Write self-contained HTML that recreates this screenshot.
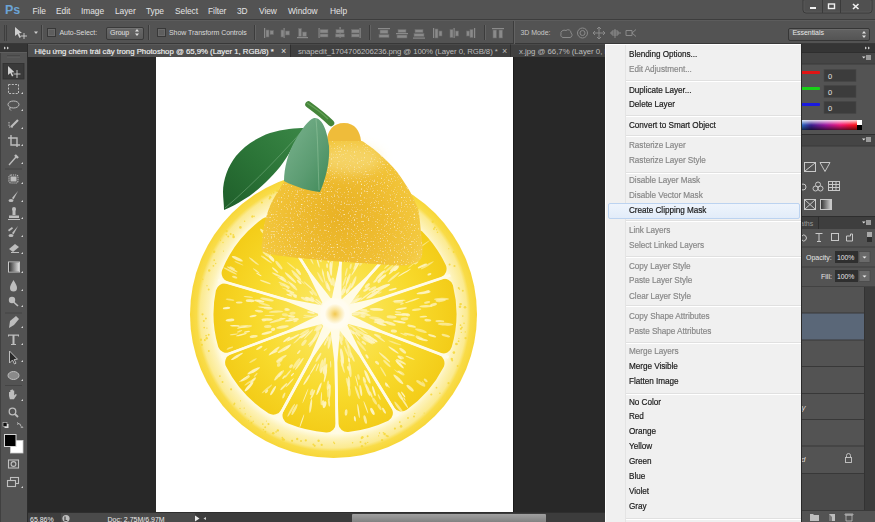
<!DOCTYPE html>
<html><head><meta charset="utf-8">
<style>
*{margin:0;padding:0;box-sizing:border-box}
html,body{width:875px;height:522px;overflow:hidden;background:#282828;font-family:"Liberation Sans",sans-serif}
.a{position:absolute}
.t{position:absolute;white-space:nowrap;line-height:1}
#menubar{left:0;top:0;width:875px;height:20px;background:#535353;border-bottom:1px solid #3d3d3d}
#menubar .t{top:6.5px;font-size:8.4px;color:#e4e4e4;letter-spacing:-0.05px}
#optbar{left:0;top:20px;width:875px;height:24px;background:#535353;border-top:1px solid #5c5c5c;border-bottom:1px solid #383838}
#optbar .t{font-size:7px;color:#dadada;letter-spacing:-0.05px}
.sep{position:absolute;top:4px;width:2px;height:15px;border-left:1px solid #3c3c3c;border-right:1px solid #636363}
.cb{position:absolute;width:9px;height:9px;background:#5e5e5e;border:1px solid #383838;box-shadow:inset 0 0 0 1px #6a6a6a}
#tabbar{left:28px;top:44px;width:847px;height:13px;background:#3b3b3b}
.tab{position:absolute;top:0;height:13px;background:#404040;border-right:1px solid #2f2f2f;border-top:1px solid #4a4a4a}
.tab .t{top:3px;font-size:7.8px;color:#bdbdbd;letter-spacing:-0.02px}
#toolbar{left:0;top:44px;width:28px;height:478px;background:#535353;border-left:1px solid #404040;border-right:1px solid #2c2c2c}
#doc{left:28px;top:57px;width:780px;height:455px;background:#282828}
#canvas{left:156px;top:57px;width:358px;height:455px;background:#fff;overflow:hidden;border-right:1px solid #1a1a1a}
#status{left:28px;top:512px;width:580px;height:10px;background:#3c3c3c;border-top:1px solid #2e2e2e}
#status .t{top:2.5px;font-size:7px;color:#ececec}
#ctx{left:605px;top:44px;width:196px;height:478px;background:#f0f0f0;border-left:1px solid #fff;border-top:1px solid #fff;box-shadow:1px 0 0 #2a2a2a}
#ctx .t{left:23px;font-size:9.2px;color:#1a1a1a;letter-spacing:-0.05px;-webkit-text-stroke:0.2px currentColor;transform:scaleX(0.89);transform-origin:0 0}
#ctx .d{color:#888}
#ctx .s{position:absolute;left:20px;width:175px;height:2px;border-top:1px solid #e0e0e0;border-bottom:1px solid #fff}
#panels{left:801px;top:44px;width:74px;height:478px;background:#535353}
#panels .t{font-size:7px;color:#dedede}
</style></head><body>
<div class="a" id="doc"></div>
<div class="a" id="canvas">
<svg width="358" height="455" viewBox="156 57 358 455">
<defs>
  <radialGradient id="rind" cx="333.5" cy="314.5" r="143.5" gradientUnits="userSpaceOnUse">
    <stop offset="0" stop-color="#fffbe4"/>
    <stop offset="0.83" stop-color="#fffbe2"/>
    <stop offset="0.87" stop-color="#fdf2b8"/>
    <stop offset="0.93" stop-color="#fbea90"/>
    <stop offset="0.955" stop-color="#f9dc48"/>
    <stop offset="1" stop-color="#f7d638"/>
  </radialGradient>
  <radialGradient id="seg" cx="335" cy="314" r="121" gradientUnits="userSpaceOnUse">
    <stop offset="0" stop-color="#fdf2a8"/>
    <stop offset="0.22" stop-color="#fae55a"/>
    <stop offset="0.65" stop-color="#f8da2c"/>
    <stop offset="1" stop-color="#f3cc18"/>
  </radialGradient>
  <radialGradient id="dome" cx="340" cy="215" r="95" gradientUnits="userSpaceOnUse">
    <stop offset="0" stop-color="#e9b226"/>
    <stop offset="0.5" stop-color="#efbd30"/>
    <stop offset="0.85" stop-color="#f3c83e"/>
    <stop offset="1" stop-color="#f5d052"/>
  </radialGradient>
  <linearGradient id="leaf1" x1="1" y1="0" x2="0" y2="1">
    <stop offset="0" stop-color="#3a8646"/>
    <stop offset="0.5" stop-color="#2b7437"/>
    <stop offset="1" stop-color="#1f5e2a"/>
  </linearGradient>
  <linearGradient id="leaf2" x1="0" y1="0" x2="1" y2="1">
    <stop offset="0" stop-color="#7cb490"/>
    <stop offset="0.6" stop-color="#5c9c72"/>
    <stop offset="1" stop-color="#3f8a58"/>
  </linearGradient>
  <radialGradient id="star" cx="335" cy="314" r="17" gradientUnits="userSpaceOnUse">
    <stop offset="0" stop-color="#f2c850"/>
    <stop offset="0.28" stop-color="#fae4a0"/>
    <stop offset="0.6" stop-color="#fffcf0"/>
    <stop offset="0.82" stop-color="#fffcf0"/>
    <stop offset="1" stop-color="#fffcf0" stop-opacity="0"/>
  </radialGradient>
  <filter id="blur3" x="-50%" y="-50%" width="200%" height="200%"><feGaussianBlur stdDeviation="6"/></filter>
  <filter id="pores" x="0" y="0" width="1" height="1">
    <feTurbulence type="fractalNoise" baseFrequency="0.7" numOctaves="1" seed="3" result="n"/>
    <feColorMatrix in="n" type="matrix" values="0 0 0 0 0.97  0 0 0 0 0.85  0 0 0 0 0.45  0 0 0 -5 1.9" result="c"/>
    <feComposite in="c" in2="SourceGraphic" operator="in" result="m"/>
    <feMerge><feMergeNode in="SourceGraphic"/><feMergeNode in="m"/></feMerge>
  </filter>
</defs>
<circle cx="333.5" cy="314.5" r="143.5" fill="url(#rind)"/>
<path fill="url(#seg)" stroke="url(#seg)" stroke-width="18" stroke-linejoin="round" d="M353.5,331.8L435.5,363.2A112.5,109.7 0 0 1 401.5,402.5L356.1,328.8ZM338.5,339.1L383.9,412.8A112.5,109.7 0 0 1 347.3,423.0L345.7,337.1ZM325.1,337.4L326.7,423.4A112.5,109.7 0 0 1 291.5,415.2L332.9,339.3ZM314.7,329.8L273.3,405.7A112.5,109.7 0 0 1 234.1,362.5L316.4,331.7ZM309.0,313.0L226.7,343.8A112.5,109.7 0 0 1 224.7,292.4L309.2,317.0ZM315.1,297.7L230.6,273.2A112.5,109.7 0 0 1 267.7,226.1L313.7,299.4ZM331.3,288.9L285.2,215.6A112.5,109.7 0 0 1 336.5,204.3L327.3,289.8ZM347.7,291.9L357.0,206.4A112.5,109.7 0 0 1 400.7,225.0L342.9,289.8ZM358.4,303.0L416.3,238.2A112.5,109.7 0 0 1 437.6,268.9L354.2,296.9ZM360.9,315.9L444.3,287.9A112.5,109.7 0 0 1 443.1,344.5L361.0,313.1Z"/>
<g fill="#fef4c0"><ellipse cx="384.5" cy="357.3" rx="7.5" ry="1.0" transform="rotate(42 384.5 357.3)" opacity="0.81"/><ellipse cx="366.0" cy="339.8" rx="5.8" ry="1.4" transform="rotate(32 366.0 339.8)" opacity="0.69"/><ellipse cx="356.5" cy="335.7" rx="6.2" ry="0.5" transform="rotate(56 356.5 335.7)" opacity="0.98"/><ellipse cx="396.3" cy="371.2" rx="2.9" ry="0.5" transform="rotate(44 396.3 371.2)" opacity="0.58"/><ellipse cx="369.2" cy="336.6" rx="2.2" ry="1.0" transform="rotate(33 369.2 336.6)" opacity="0.93"/><ellipse cx="386.9" cy="363.5" rx="5.0" ry="1.2" transform="rotate(44 386.9 363.5)" opacity="0.68"/><ellipse cx="398.6" cy="407.2" rx="7.0" ry="1.3" transform="rotate(53 398.6 407.2)" opacity="0.65"/><ellipse cx="379.7" cy="338.0" rx="6.6" ry="0.9" transform="rotate(36 379.7 338.0)" opacity="0.72"/><ellipse cx="404.4" cy="399.0" rx="2.0" ry="0.7" transform="rotate(60 404.4 399.0)" opacity="0.76"/><ellipse cx="425.7" cy="380.3" rx="2.4" ry="1.2" transform="rotate(42 425.7 380.3)" opacity="0.67"/><ellipse cx="359.4" cy="332.0" rx="7.8" ry="1.3" transform="rotate(29 359.4 332.0)" opacity="0.66"/><ellipse cx="362.3" cy="330.3" rx="6.8" ry="0.7" transform="rotate(33 362.3 330.3)" opacity="0.75"/><ellipse cx="363.9" cy="342.9" rx="2.8" ry="1.2" transform="rotate(38 363.9 342.9)" opacity="0.74"/><ellipse cx="370.9" cy="338.1" rx="7.8" ry="1.4" transform="rotate(31 370.9 338.1)" opacity="0.95"/><ellipse cx="369.4" cy="339.8" rx="7.1" ry="1.2" transform="rotate(30 369.4 339.8)" opacity="1.00"/><ellipse cx="371.1" cy="338.0" rx="6.6" ry="0.9" transform="rotate(30 371.1 338.0)" opacity="0.58"/><ellipse cx="358.0" cy="334.1" rx="3.5" ry="1.2" transform="rotate(39 358.0 334.1)" opacity="0.75"/><ellipse cx="420.8" cy="383.4" rx="5.4" ry="1.5" transform="rotate(33 420.8 383.4)" opacity="0.62"/><ellipse cx="403.2" cy="394.5" rx="3.5" ry="0.7" transform="rotate(55 403.2 394.5)" opacity="0.97"/><ellipse cx="361.4" cy="345.8" rx="7.3" ry="1.2" transform="rotate(49 361.4 345.8)" opacity="0.60"/><ellipse cx="352.1" cy="331.9" rx="3.4" ry="1.3" transform="rotate(42 352.1 331.9)" opacity="0.92"/><ellipse cx="401.1" cy="357.3" rx="3.1" ry="1.3" transform="rotate(25 401.1 357.3)" opacity="0.65"/><ellipse cx="383.2" cy="371.7" rx="5.7" ry="0.8" transform="rotate(59 383.2 371.7)" opacity="0.64"/><ellipse cx="352.8" cy="327.3" rx="4.7" ry="0.6" transform="rotate(31 352.8 327.3)" opacity="0.72"/><ellipse cx="402.7" cy="350.7" rx="4.2" ry="1.5" transform="rotate(39 402.7 350.7)" opacity="0.85"/><ellipse cx="399.6" cy="372.4" rx="2.8" ry="0.5" transform="rotate(33 399.6 372.4)" opacity="0.96"/><ellipse cx="386.5" cy="384.8" rx="2.1" ry="1.2" transform="rotate(54 386.5 384.8)" opacity="0.88"/><ellipse cx="367.0" cy="356.4" rx="2.5" ry="1.1" transform="rotate(58 367.0 356.4)" opacity="0.96"/><ellipse cx="398.4" cy="379.3" rx="6.8" ry="1.5" transform="rotate(44 398.4 379.3)" opacity="0.86"/><ellipse cx="400.3" cy="396.0" rx="4.5" ry="1.4" transform="rotate(59 400.3 396.0)" opacity="0.81"/><ellipse cx="401.0" cy="361.8" rx="5.5" ry="1.2" transform="rotate(28 401.0 361.8)" opacity="0.84"/><ellipse cx="404.5" cy="402.6" rx="6.4" ry="0.9" transform="rotate(57 404.5 402.6)" opacity="0.81"/><ellipse cx="377.1" cy="362.8" rx="2.5" ry="1.3" transform="rotate(41 377.1 362.8)" opacity="0.82"/><ellipse cx="393.5" cy="350.0" rx="6.2" ry="1.0" transform="rotate(35 393.5 350.0)" opacity="0.96"/><ellipse cx="377.4" cy="335.7" rx="3.8" ry="1.2" transform="rotate(22 377.4 335.7)" opacity="0.63"/><ellipse cx="410.1" cy="388.2" rx="4.7" ry="1.5" transform="rotate(42 410.1 388.2)" opacity="0.85"/><ellipse cx="368.0" cy="339.6" rx="6.8" ry="1.5" transform="rotate(46 368.0 339.6)" opacity="0.72"/><ellipse cx="399.6" cy="357.5" rx="2.8" ry="1.0" transform="rotate(41 399.6 357.5)" opacity="0.93"/><ellipse cx="387.5" cy="385.1" rx="3.7" ry="0.7" transform="rotate(53 387.5 385.1)" opacity="0.67"/><ellipse cx="369.4" cy="340.3" rx="5.8" ry="1.0" transform="rotate(34 369.4 340.3)" opacity="0.93"/><ellipse cx="423.6" cy="383.1" rx="2.4" ry="0.5" transform="rotate(46 423.6 383.1)" opacity="0.57"/><ellipse cx="401.2" cy="373.0" rx="3.9" ry="1.4" transform="rotate(33 401.2 373.0)" opacity="0.61"/><ellipse cx="394.8" cy="342.9" rx="7.0" ry="0.8" transform="rotate(19 394.8 342.9)" opacity="0.57"/><ellipse cx="399.6" cy="364.2" rx="5.8" ry="1.2" transform="rotate(45 399.6 364.2)" opacity="0.98"/><ellipse cx="410.1" cy="357.8" rx="4.9" ry="0.7" transform="rotate(21 410.1 357.8)" opacity="0.76"/><ellipse cx="371.1" cy="394.6" rx="3.6" ry="0.9" transform="rotate(70 371.1 394.6)" opacity="0.78"/><ellipse cx="349.3" cy="392.0" rx="4.4" ry="1.4" transform="rotate(88 349.3 392.0)" opacity="0.59"/><ellipse cx="354.9" cy="418.7" rx="2.8" ry="1.0" transform="rotate(82 354.9 418.7)" opacity="0.96"/><ellipse cx="350.0" cy="370.1" rx="7.3" ry="1.4" transform="rotate(84 350.0 370.1)" opacity="0.76"/><ellipse cx="367.9" cy="390.0" rx="6.3" ry="1.4" transform="rotate(70 367.9 390.0)" opacity="0.87"/><ellipse cx="342.0" cy="356.0" rx="7.9" ry="1.6" transform="rotate(81 342.0 356.0)" opacity="0.91"/><ellipse cx="342.6" cy="366.2" rx="7.1" ry="0.9" transform="rotate(74 342.6 366.2)" opacity="0.75"/><ellipse cx="348.1" cy="386.5" rx="4.9" ry="0.5" transform="rotate(86 348.1 386.5)" opacity="0.58"/><ellipse cx="374.6" cy="401.1" rx="4.0" ry="1.4" transform="rotate(59 374.6 401.1)" opacity="0.62"/><ellipse cx="348.9" cy="383.3" rx="7.0" ry="1.3" transform="rotate(88 348.9 383.3)" opacity="0.77"/><ellipse cx="384.0" cy="410.7" rx="3.3" ry="1.1" transform="rotate(60 384.0 410.7)" opacity="0.88"/><ellipse cx="357.3" cy="392.4" rx="7.1" ry="1.1" transform="rotate(71 357.3 392.4)" opacity="0.72"/><ellipse cx="346.1" cy="412.5" rx="3.2" ry="1.4" transform="rotate(93 346.1 412.5)" opacity="0.79"/><ellipse cx="365.0" cy="383.7" rx="5.2" ry="1.1" transform="rotate(69 365.0 383.7)" opacity="0.56"/><ellipse cx="365.2" cy="419.5" rx="4.4" ry="1.4" transform="rotate(76 365.2 419.5)" opacity="0.77"/><ellipse cx="373.9" cy="391.1" rx="5.2" ry="1.0" transform="rotate(73 373.9 391.1)" opacity="0.97"/><ellipse cx="349.0" cy="360.0" rx="2.8" ry="1.0" transform="rotate(80 349.0 360.0)" opacity="0.96"/><ellipse cx="358.5" cy="377.0" rx="3.1" ry="1.2" transform="rotate(79 358.5 377.0)" opacity="0.61"/><ellipse cx="379.2" cy="397.0" rx="3.2" ry="0.7" transform="rotate(66 379.2 397.0)" opacity="0.69"/><ellipse cx="348.5" cy="368.4" rx="2.6" ry="1.3" transform="rotate(69 348.5 368.4)" opacity="0.78"/><ellipse cx="352.3" cy="357.0" rx="5.2" ry="1.0" transform="rotate(66 352.3 357.0)" opacity="0.74"/><ellipse cx="364.4" cy="379.8" rx="3.2" ry="1.2" transform="rotate(69 364.4 379.8)" opacity="0.79"/><ellipse cx="358.5" cy="411.0" rx="7.1" ry="0.8" transform="rotate(82 358.5 411.0)" opacity="0.91"/><ellipse cx="372.4" cy="411.4" rx="3.9" ry="1.5" transform="rotate(64 372.4 411.4)" opacity="1.00"/><ellipse cx="379.5" cy="407.1" rx="3.4" ry="1.3" transform="rotate(60 379.5 407.1)" opacity="0.59"/><ellipse cx="365.9" cy="407.3" rx="6.7" ry="0.6" transform="rotate(70 365.9 407.3)" opacity="0.86"/><ellipse cx="341.7" cy="335.0" rx="6.1" ry="1.5" transform="rotate(82 341.7 335.0)" opacity="0.60"/><ellipse cx="347.8" cy="382.5" rx="5.0" ry="1.3" transform="rotate(73 347.8 382.5)" opacity="0.58"/><ellipse cx="347.1" cy="343.5" rx="5.3" ry="1.1" transform="rotate(70 347.1 343.5)" opacity="0.62"/><ellipse cx="349.4" cy="351.2" rx="7.0" ry="1.6" transform="rotate(78 349.4 351.2)" opacity="0.59"/><ellipse cx="340.7" cy="340.5" rx="4.8" ry="1.3" transform="rotate(75 340.7 340.5)" opacity="0.76"/><ellipse cx="356.8" cy="381.2" rx="5.6" ry="0.5" transform="rotate(76 356.8 381.2)" opacity="0.93"/><ellipse cx="346.6" cy="351.7" rx="6.4" ry="0.9" transform="rotate(67 346.6 351.7)" opacity="0.62"/><ellipse cx="367.4" cy="376.8" rx="7.4" ry="1.4" transform="rotate(67 367.4 376.8)" opacity="0.94"/><ellipse cx="360.8" cy="390.5" rx="5.6" ry="1.1" transform="rotate(81 360.8 390.5)" opacity="0.91"/><ellipse cx="342.2" cy="360.4" rx="6.5" ry="1.4" transform="rotate(88 342.2 360.4)" opacity="0.73"/><ellipse cx="294.5" cy="409.6" rx="6.2" ry="1.3" transform="rotate(118 294.5 409.6)" opacity="0.73"/><ellipse cx="329.0" cy="402.5" rx="4.1" ry="1.0" transform="rotate(84 329.0 402.5)" opacity="0.71"/><ellipse cx="311.7" cy="392.1" rx="3.4" ry="1.5" transform="rotate(110 311.7 392.1)" opacity="0.70"/><ellipse cx="312.8" cy="394.4" rx="5.2" ry="0.9" transform="rotate(115 312.8 394.4)" opacity="0.84"/><ellipse cx="305.4" cy="395.9" rx="7.9" ry="0.5" transform="rotate(112 305.4 395.9)" opacity="0.88"/><ellipse cx="325.2" cy="359.7" rx="2.3" ry="0.7" transform="rotate(99 325.2 359.7)" opacity="0.59"/><ellipse cx="318.5" cy="357.3" rx="5.3" ry="1.1" transform="rotate(120 318.5 357.3)" opacity="0.81"/><ellipse cx="301.9" cy="420.9" rx="6.9" ry="0.6" transform="rotate(109 301.9 420.9)" opacity="0.89"/><ellipse cx="327.7" cy="338.2" rx="3.0" ry="1.0" transform="rotate(100 327.7 338.2)" opacity="0.77"/><ellipse cx="329.6" cy="392.8" rx="7.7" ry="1.0" transform="rotate(94 329.6 392.8)" opacity="0.82"/><ellipse cx="325.5" cy="370.2" rx="5.9" ry="1.1" transform="rotate(95 325.5 370.2)" opacity="0.87"/><ellipse cx="330.7" cy="364.3" rx="3.5" ry="0.5" transform="rotate(88 330.7 364.3)" opacity="0.89"/><ellipse cx="313.0" cy="369.2" rx="6.5" ry="0.6" transform="rotate(121 313.0 369.2)" opacity="0.98"/><ellipse cx="326.4" cy="341.1" rx="4.6" ry="1.0" transform="rotate(117 326.4 341.1)" opacity="0.66"/><ellipse cx="306.8" cy="379.7" rx="6.3" ry="1.0" transform="rotate(122 306.8 379.7)" opacity="0.92"/><ellipse cx="327.9" cy="392.0" rx="5.7" ry="1.0" transform="rotate(89 327.9 392.0)" opacity="0.57"/><ellipse cx="327.9" cy="385.3" rx="4.7" ry="1.2" transform="rotate(95 327.9 385.3)" opacity="0.67"/><ellipse cx="319.0" cy="388.8" rx="6.7" ry="1.1" transform="rotate(112 319.0 388.8)" opacity="0.98"/><ellipse cx="322.9" cy="402.9" rx="2.7" ry="1.5" transform="rotate(103 322.9 402.9)" opacity="0.83"/><ellipse cx="325.8" cy="369.6" rx="6.1" ry="1.1" transform="rotate(101 325.8 369.6)" opacity="0.83"/><ellipse cx="324.6" cy="404.7" rx="3.5" ry="1.6" transform="rotate(105 324.6 404.7)" opacity="0.95"/><ellipse cx="330.3" cy="338.1" rx="3.6" ry="1.0" transform="rotate(103 330.3 338.1)" opacity="0.60"/><ellipse cx="329.3" cy="386.6" rx="2.5" ry="1.2" transform="rotate(95 329.3 386.6)" opacity="0.83"/><ellipse cx="321.6" cy="370.1" rx="3.3" ry="0.9" transform="rotate(108 321.6 370.1)" opacity="0.93"/><ellipse cx="330.0" cy="342.0" rx="6.9" ry="1.2" transform="rotate(105 330.0 342.0)" opacity="0.65"/><ellipse cx="325.4" cy="375.6" rx="6.9" ry="0.9" transform="rotate(102 325.4 375.6)" opacity="1.00"/><ellipse cx="321.4" cy="365.5" rx="6.5" ry="1.5" transform="rotate(103 321.4 365.5)" opacity="0.72"/><ellipse cx="325.4" cy="343.4" rx="2.5" ry="0.6" transform="rotate(109 325.4 343.4)" opacity="0.77"/><ellipse cx="321.3" cy="398.4" rx="6.7" ry="0.6" transform="rotate(93 321.3 398.4)" opacity="0.85"/><ellipse cx="329.0" cy="342.6" rx="6.3" ry="1.3" transform="rotate(97 329.0 342.6)" opacity="0.61"/><ellipse cx="317.4" cy="367.5" rx="4.2" ry="0.6" transform="rotate(112 317.4 367.5)" opacity="0.81"/><ellipse cx="291.2" cy="410.3" rx="7.5" ry="1.0" transform="rotate(120 291.2 410.3)" opacity="0.69"/><ellipse cx="324.1" cy="365.4" rx="7.6" ry="1.5" transform="rotate(97 324.1 365.4)" opacity="0.71"/><ellipse cx="324.0" cy="369.9" rx="4.4" ry="0.9" transform="rotate(95 324.0 369.9)" opacity="0.80"/><ellipse cx="310.7" cy="406.0" rx="7.0" ry="1.1" transform="rotate(98 310.7 406.0)" opacity="0.89"/><ellipse cx="266.6" cy="391.4" rx="2.1" ry="1.1" transform="rotate(132 266.6 391.4)" opacity="0.81"/><ellipse cx="244.4" cy="378.4" rx="6.8" ry="0.6" transform="rotate(145 244.4 378.4)" opacity="0.90"/><ellipse cx="315.9" cy="336.8" rx="6.4" ry="1.5" transform="rotate(121 315.9 336.8)" opacity="0.84"/><ellipse cx="305.1" cy="334.6" rx="5.9" ry="0.8" transform="rotate(139 305.1 334.6)" opacity="0.89"/><ellipse cx="273.7" cy="352.4" rx="4.4" ry="0.9" transform="rotate(157 273.7 352.4)" opacity="0.85"/><ellipse cx="281.3" cy="358.3" rx="6.3" ry="1.3" transform="rotate(148 281.3 358.3)" opacity="0.73"/><ellipse cx="253.7" cy="370.8" rx="7.1" ry="1.4" transform="rotate(151 253.7 370.8)" opacity="0.95"/><ellipse cx="245.4" cy="378.6" rx="5.1" ry="1.3" transform="rotate(150 245.4 378.6)" opacity="0.74"/><ellipse cx="296.6" cy="363.4" rx="6.4" ry="1.6" transform="rotate(125 296.6 363.4)" opacity="0.63"/><ellipse cx="304.0" cy="342.7" rx="3.8" ry="1.6" transform="rotate(128 304.0 342.7)" opacity="0.69"/><ellipse cx="308.6" cy="334.1" rx="6.7" ry="0.7" transform="rotate(133 308.6 334.1)" opacity="0.76"/><ellipse cx="265.5" cy="349.6" rx="2.2" ry="0.6" transform="rotate(146 265.5 349.6)" opacity="0.65"/><ellipse cx="297.6" cy="339.8" rx="5.6" ry="0.7" transform="rotate(138 297.6 339.8)" opacity="0.68"/><ellipse cx="302.5" cy="335.9" rx="3.9" ry="1.1" transform="rotate(152 302.5 335.9)" opacity="0.77"/><ellipse cx="293.3" cy="337.7" rx="7.5" ry="0.9" transform="rotate(151 293.3 337.7)" opacity="0.98"/><ellipse cx="291.0" cy="366.2" rx="2.3" ry="1.5" transform="rotate(135 291.0 366.2)" opacity="0.72"/><ellipse cx="279.6" cy="360.9" rx="3.6" ry="1.6" transform="rotate(142 279.6 360.9)" opacity="0.66"/><ellipse cx="318.9" cy="328.1" rx="4.2" ry="1.4" transform="rotate(142 318.9 328.1)" opacity="0.82"/><ellipse cx="310.8" cy="342.5" rx="3.9" ry="0.8" transform="rotate(137 310.8 342.5)" opacity="0.78"/><ellipse cx="259.3" cy="347.9" rx="3.6" ry="1.1" transform="rotate(148 259.3 347.9)" opacity="0.90"/><ellipse cx="318.9" cy="326.0" rx="7.1" ry="1.4" transform="rotate(134 318.9 326.0)" opacity="0.67"/><ellipse cx="283.8" cy="386.6" rx="4.9" ry="1.0" transform="rotate(134 283.8 386.6)" opacity="0.81"/><ellipse cx="266.9" cy="389.0" rx="6.7" ry="1.0" transform="rotate(140 266.9 389.0)" opacity="0.59"/><ellipse cx="273.1" cy="390.6" rx="5.3" ry="1.1" transform="rotate(121 273.1 390.6)" opacity="0.92"/><ellipse cx="298.8" cy="352.1" rx="2.5" ry="0.8" transform="rotate(132 298.8 352.1)" opacity="0.87"/><ellipse cx="288.0" cy="346.9" rx="2.6" ry="0.9" transform="rotate(144 288.0 346.9)" opacity="0.99"/><ellipse cx="253.9" cy="371.6" rx="2.1" ry="0.9" transform="rotate(148 253.9 371.6)" opacity="0.66"/><ellipse cx="278.8" cy="364.9" rx="2.1" ry="1.6" transform="rotate(143 278.8 364.9)" opacity="0.64"/><ellipse cx="281.2" cy="373.6" rx="4.3" ry="1.1" transform="rotate(127 281.2 373.6)" opacity="0.70"/><ellipse cx="285.9" cy="349.1" rx="3.5" ry="0.7" transform="rotate(148 285.9 349.1)" opacity="0.70"/><ellipse cx="249.6" cy="382.0" rx="6.3" ry="0.9" transform="rotate(147 249.6 382.0)" opacity="0.59"/><ellipse cx="312.5" cy="341.8" rx="6.1" ry="1.3" transform="rotate(122 312.5 341.8)" opacity="0.73"/><ellipse cx="255.7" cy="374.9" rx="2.5" ry="0.7" transform="rotate(135 255.7 374.9)" opacity="0.61"/><ellipse cx="299.4" cy="363.8" rx="7.5" ry="1.0" transform="rotate(125 299.4 363.8)" opacity="0.84"/><ellipse cx="253.1" cy="360.6" rx="4.3" ry="0.9" transform="rotate(148 253.1 360.6)" opacity="0.56"/><ellipse cx="284.5" cy="348.7" rx="7.9" ry="1.4" transform="rotate(148 284.5 348.7)" opacity="0.82"/><ellipse cx="318.8" cy="329.4" rx="4.1" ry="1.2" transform="rotate(128 318.8 329.4)" opacity="0.72"/><ellipse cx="274.1" cy="351.1" rx="7.0" ry="1.2" transform="rotate(141 274.1 351.1)" opacity="0.89"/><ellipse cx="253.0" cy="380.5" rx="4.1" ry="1.1" transform="rotate(133 253.0 380.5)" opacity="0.87"/><ellipse cx="249.0" cy="386.7" rx="6.3" ry="1.4" transform="rotate(133 249.0 386.7)" opacity="0.98"/><ellipse cx="284.0" cy="377.1" rx="2.5" ry="0.8" transform="rotate(130 284.0 377.1)" opacity="0.86"/><ellipse cx="286.7" cy="339.5" rx="4.2" ry="1.0" transform="rotate(144 286.7 339.5)" opacity="0.99"/><ellipse cx="304.5" cy="332.2" rx="5.3" ry="1.1" transform="rotate(150 304.5 332.2)" opacity="0.67"/><ellipse cx="237.0" cy="356.4" rx="6.9" ry="1.2" transform="rotate(149 237.0 356.4)" opacity="0.92"/><ellipse cx="290.7" cy="338.6" rx="3.4" ry="1.1" transform="rotate(157 290.7 338.6)" opacity="0.63"/><ellipse cx="292.5" cy="374.6" rx="2.2" ry="0.7" transform="rotate(134 292.5 374.6)" opacity="0.97"/><ellipse cx="278.1" cy="375.8" rx="6.0" ry="1.3" transform="rotate(130 278.1 375.8)" opacity="0.82"/><ellipse cx="283.8" cy="395.5" rx="3.2" ry="1.0" transform="rotate(114 283.8 395.5)" opacity="0.72"/><ellipse cx="287.9" cy="373.7" rx="5.1" ry="0.8" transform="rotate(129 287.9 373.7)" opacity="0.70"/><ellipse cx="289.7" cy="382.7" rx="6.0" ry="0.7" transform="rotate(132 289.7 382.7)" opacity="0.82"/><ellipse cx="267.1" cy="319.5" rx="5.7" ry="1.3" transform="rotate(180 267.1 319.5)" opacity="0.89"/><ellipse cx="267.0" cy="299.5" rx="7.0" ry="1.4" transform="rotate(191 267.0 299.5)" opacity="0.75"/><ellipse cx="259.3" cy="301.0" rx="5.2" ry="1.1" transform="rotate(189 259.3 301.0)" opacity="0.96"/><ellipse cx="282.5" cy="327.0" rx="6.4" ry="1.5" transform="rotate(170 282.5 327.0)" opacity="0.82"/><ellipse cx="242.5" cy="327.2" rx="5.6" ry="0.6" transform="rotate(164 242.5 327.2)" opacity="0.75"/><ellipse cx="264.1" cy="320.3" rx="2.3" ry="1.3" transform="rotate(175 264.1 320.3)" opacity="0.66"/><ellipse cx="282.4" cy="318.5" rx="3.4" ry="0.6" transform="rotate(183 282.4 318.5)" opacity="0.98"/><ellipse cx="250.2" cy="300.7" rx="4.5" ry="1.4" transform="rotate(184 250.2 300.7)" opacity="0.89"/><ellipse cx="259.2" cy="301.0" rx="2.6" ry="1.4" transform="rotate(182 259.2 301.0)" opacity="0.79"/><ellipse cx="229.9" cy="348.1" rx="3.5" ry="0.8" transform="rotate(158 229.9 348.1)" opacity="0.58"/><ellipse cx="230.0" cy="299.7" rx="4.4" ry="0.9" transform="rotate(190 230.0 299.7)" opacity="0.57"/><ellipse cx="310.9" cy="312.6" rx="3.8" ry="1.0" transform="rotate(192 310.9 312.6)" opacity="0.99"/><ellipse cx="267.8" cy="326.5" rx="3.8" ry="1.5" transform="rotate(177 267.8 326.5)" opacity="0.64"/><ellipse cx="234.7" cy="325.8" rx="4.8" ry="0.7" transform="rotate(181 234.7 325.8)" opacity="1.00"/><ellipse cx="292.5" cy="313.3" rx="3.1" ry="1.5" transform="rotate(172 292.5 313.3)" opacity="0.60"/><ellipse cx="244.7" cy="326.5" rx="7.4" ry="1.5" transform="rotate(176 244.7 326.5)" opacity="0.61"/><ellipse cx="248.2" cy="296.9" rx="4.7" ry="0.6" transform="rotate(186 248.2 296.9)" opacity="0.69"/><ellipse cx="247.0" cy="331.7" rx="3.1" ry="0.8" transform="rotate(172 247.0 331.7)" opacity="0.91"/><ellipse cx="276.0" cy="311.7" rx="7.3" ry="1.1" transform="rotate(177 276.0 311.7)" opacity="0.69"/><ellipse cx="226.5" cy="308.1" rx="3.7" ry="1.2" transform="rotate(175 226.5 308.1)" opacity="0.99"/><ellipse cx="269.6" cy="315.5" rx="5.2" ry="0.5" transform="rotate(181 269.6 315.5)" opacity="0.68"/><ellipse cx="287.9" cy="309.5" rx="2.5" ry="0.8" transform="rotate(191 287.9 309.5)" opacity="0.66"/><ellipse cx="284.9" cy="314.8" rx="3.1" ry="1.5" transform="rotate(189 284.9 314.8)" opacity="0.57"/><ellipse cx="267.9" cy="308.2" rx="4.3" ry="1.5" transform="rotate(185 267.9 308.2)" opacity="0.63"/><ellipse cx="259.0" cy="311.2" rx="4.2" ry="1.2" transform="rotate(188 259.0 311.2)" opacity="0.78"/><ellipse cx="264.3" cy="304.3" rx="6.1" ry="1.1" transform="rotate(197 264.3 304.3)" opacity="0.63"/><ellipse cx="241.4" cy="334.7" rx="5.6" ry="0.8" transform="rotate(166 241.4 334.7)" opacity="0.90"/><ellipse cx="239.2" cy="302.5" rx="3.4" ry="1.0" transform="rotate(181 239.2 302.5)" opacity="0.81"/><ellipse cx="266.9" cy="332.9" rx="5.6" ry="1.3" transform="rotate(166 266.9 332.9)" opacity="0.94"/><ellipse cx="295.4" cy="321.1" rx="2.1" ry="1.0" transform="rotate(168 295.4 321.1)" opacity="0.75"/><ellipse cx="286.7" cy="309.5" rx="2.4" ry="1.5" transform="rotate(187 286.7 309.5)" opacity="0.79"/><ellipse cx="239.6" cy="331.2" rx="2.9" ry="0.8" transform="rotate(160 239.6 331.2)" opacity="0.69"/><ellipse cx="253.1" cy="316.0" rx="3.6" ry="1.1" transform="rotate(170 253.1 316.0)" opacity="0.92"/><ellipse cx="295.9" cy="319.3" rx="3.0" ry="1.3" transform="rotate(179 295.9 319.3)" opacity="0.90"/><ellipse cx="307.4" cy="315.7" rx="4.2" ry="0.7" transform="rotate(186 307.4 315.7)" opacity="0.57"/><ellipse cx="265.4" cy="307.5" rx="7.9" ry="0.7" transform="rotate(185 265.4 307.5)" opacity="0.89"/><ellipse cx="310.0" cy="316.6" rx="7.3" ry="0.7" transform="rotate(172 310.0 316.6)" opacity="0.68"/><ellipse cx="273.1" cy="329.4" rx="2.2" ry="1.6" transform="rotate(171 273.1 329.4)" opacity="0.88"/><ellipse cx="290.2" cy="320.4" rx="5.3" ry="0.8" transform="rotate(171 290.2 320.4)" opacity="0.97"/><ellipse cx="277.1" cy="320.7" rx="7.9" ry="1.2" transform="rotate(164 277.1 320.7)" opacity="0.73"/><ellipse cx="253.7" cy="336.4" rx="4.1" ry="1.3" transform="rotate(171 253.7 336.4)" opacity="0.82"/><ellipse cx="230.0" cy="320.1" rx="4.4" ry="1.4" transform="rotate(174 230.0 320.1)" opacity="0.90"/><ellipse cx="291.4" cy="318.4" rx="3.1" ry="1.1" transform="rotate(167 291.4 318.4)" opacity="0.64"/><ellipse cx="291.3" cy="316.2" rx="3.9" ry="1.0" transform="rotate(187 291.3 316.2)" opacity="0.86"/><ellipse cx="234.0" cy="334.3" rx="4.3" ry="0.6" transform="rotate(172 234.0 334.3)" opacity="0.71"/><ellipse cx="289.2" cy="295.1" rx="3.1" ry="0.8" transform="rotate(201 289.2 295.1)" opacity="0.97"/><ellipse cx="256.3" cy="270.9" rx="4.2" ry="0.7" transform="rotate(218 256.3 270.9)" opacity="0.71"/><ellipse cx="268.7" cy="248.1" rx="7.4" ry="0.5" transform="rotate(222 268.7 248.1)" opacity="0.72"/><ellipse cx="314.2" cy="292.8" rx="4.0" ry="1.3" transform="rotate(227 314.2 292.8)" opacity="0.57"/><ellipse cx="281.6" cy="285.1" rx="2.2" ry="0.7" transform="rotate(211 281.6 285.1)" opacity="0.56"/><ellipse cx="291.4" cy="284.0" rx="5.3" ry="0.6" transform="rotate(219 291.4 284.0)" opacity="0.67"/><ellipse cx="268.8" cy="252.8" rx="2.9" ry="0.7" transform="rotate(219 268.8 252.8)" opacity="0.87"/><ellipse cx="283.4" cy="280.3" rx="7.2" ry="0.7" transform="rotate(210 283.4 280.3)" opacity="0.71"/><ellipse cx="295.0" cy="296.4" rx="2.1" ry="1.2" transform="rotate(206 295.0 296.4)" opacity="0.91"/><ellipse cx="237.3" cy="258.8" rx="6.0" ry="1.5" transform="rotate(204 237.3 258.8)" opacity="0.86"/><ellipse cx="284.0" cy="246.6" rx="7.2" ry="0.8" transform="rotate(236 284.0 246.6)" opacity="0.59"/><ellipse cx="281.7" cy="279.0" rx="2.4" ry="0.9" transform="rotate(211 281.7 279.0)" opacity="0.77"/><ellipse cx="290.3" cy="291.7" rx="4.4" ry="1.0" transform="rotate(200 290.3 291.7)" opacity="0.85"/><ellipse cx="293.2" cy="294.5" rx="4.1" ry="1.0" transform="rotate(199 293.2 294.5)" opacity="0.81"/><ellipse cx="266.2" cy="258.9" rx="6.2" ry="0.5" transform="rotate(217 266.2 258.9)" opacity="0.71"/><ellipse cx="312.3" cy="298.2" rx="2.3" ry="1.0" transform="rotate(217 312.3 298.2)" opacity="0.76"/><ellipse cx="287.6" cy="287.5" rx="2.1" ry="0.9" transform="rotate(218 287.6 287.5)" opacity="0.80"/><ellipse cx="299.3" cy="282.0" rx="3.1" ry="1.0" transform="rotate(225 299.3 282.0)" opacity="0.98"/><ellipse cx="290.5" cy="277.6" rx="7.7" ry="1.3" transform="rotate(223 290.5 277.6)" opacity="0.83"/><ellipse cx="283.5" cy="279.1" rx="3.7" ry="1.4" transform="rotate(222 283.5 279.1)" opacity="0.72"/><ellipse cx="234.7" cy="277.1" rx="2.8" ry="1.1" transform="rotate(197 234.7 277.1)" opacity="0.71"/><ellipse cx="232.3" cy="268.0" rx="3.2" ry="0.8" transform="rotate(208 232.3 268.0)" opacity="0.66"/><ellipse cx="319.1" cy="301.8" rx="4.4" ry="0.8" transform="rotate(218 319.1 301.8)" opacity="0.84"/><ellipse cx="278.9" cy="265.1" rx="5.4" ry="1.4" transform="rotate(231 278.9 265.1)" opacity="0.70"/><ellipse cx="298.5" cy="271.8" rx="3.9" ry="1.3" transform="rotate(234 298.5 271.8)" opacity="0.86"/><ellipse cx="262.3" cy="231.1" rx="3.0" ry="1.2" transform="rotate(229 262.3 231.1)" opacity="0.80"/><ellipse cx="284.4" cy="284.8" rx="6.5" ry="1.1" transform="rotate(205 284.4 284.8)" opacity="0.66"/><ellipse cx="286.6" cy="289.5" rx="5.1" ry="0.6" transform="rotate(199 286.6 289.5)" opacity="0.58"/><ellipse cx="311.3" cy="292.8" rx="2.7" ry="1.0" transform="rotate(228 311.3 292.8)" opacity="0.77"/><ellipse cx="309.0" cy="286.3" rx="7.2" ry="0.6" transform="rotate(223 309.0 286.3)" opacity="0.78"/><ellipse cx="253.9" cy="261.3" rx="6.3" ry="0.8" transform="rotate(218 253.9 261.3)" opacity="0.70"/><ellipse cx="296.3" cy="275.3" rx="7.1" ry="1.4" transform="rotate(227 296.3 275.3)" opacity="0.74"/><ellipse cx="268.4" cy="255.7" rx="7.0" ry="1.4" transform="rotate(214 268.4 255.7)" opacity="0.72"/><ellipse cx="258.9" cy="274.5" rx="3.1" ry="0.5" transform="rotate(210 258.9 274.5)" opacity="0.97"/><ellipse cx="232.3" cy="269.3" rx="6.1" ry="1.0" transform="rotate(207 232.3 269.3)" opacity="0.73"/><ellipse cx="273.1" cy="226.2" rx="2.3" ry="1.3" transform="rotate(228 273.1 226.2)" opacity="0.57"/><ellipse cx="298.9" cy="279.2" rx="8.0" ry="0.6" transform="rotate(221 298.9 279.2)" opacity="0.56"/><ellipse cx="275.2" cy="270.1" rx="4.2" ry="0.8" transform="rotate(223 275.2 270.1)" opacity="0.93"/><ellipse cx="293.2" cy="286.3" rx="5.7" ry="1.3" transform="rotate(224 293.2 286.3)" opacity="0.73"/><ellipse cx="266.5" cy="259.6" rx="6.8" ry="0.7" transform="rotate(213 266.5 259.6)" opacity="0.60"/><ellipse cx="238.9" cy="263.3" rx="4.9" ry="0.6" transform="rotate(205 238.9 263.3)" opacity="0.56"/><ellipse cx="265.4" cy="282.0" rx="5.8" ry="0.8" transform="rotate(200 265.4 282.0)" opacity="0.77"/><ellipse cx="284.3" cy="285.7" rx="2.3" ry="0.6" transform="rotate(218 284.3 285.7)" opacity="0.69"/><ellipse cx="309.5" cy="299.4" rx="4.9" ry="1.6" transform="rotate(204 309.5 299.4)" opacity="0.94"/><ellipse cx="277.9" cy="275.5" rx="6.8" ry="0.9" transform="rotate(206 277.9 275.5)" opacity="0.80"/><ellipse cx="271.6" cy="258.6" rx="3.7" ry="1.5" transform="rotate(229 271.6 258.6)" opacity="1.00"/><ellipse cx="291.6" cy="266.0" rx="6.3" ry="0.7" transform="rotate(219 291.6 266.0)" opacity="0.63"/><ellipse cx="304.7" cy="299.0" rx="4.2" ry="1.3" transform="rotate(203 304.7 299.0)" opacity="0.78"/><ellipse cx="316.9" cy="302.5" rx="7.8" ry="0.5" transform="rotate(214 316.9 302.5)" opacity="0.91"/><ellipse cx="267.6" cy="245.9" rx="4.4" ry="1.4" transform="rotate(233 267.6 245.9)" opacity="0.90"/><ellipse cx="230.1" cy="270.9" rx="7.7" ry="0.9" transform="rotate(207 230.1 270.9)" opacity="0.66"/><ellipse cx="284.5" cy="221.7" rx="5.5" ry="0.7" transform="rotate(240 284.5 221.7)" opacity="0.72"/><ellipse cx="330.3" cy="231.2" rx="4.2" ry="1.2" transform="rotate(264 330.3 231.2)" opacity="0.68"/><ellipse cx="301.1" cy="215.2" rx="2.6" ry="0.9" transform="rotate(256 301.1 215.2)" opacity="0.65"/><ellipse cx="316.8" cy="225.3" rx="6.1" ry="0.7" transform="rotate(251 316.8 225.3)" opacity="0.61"/><ellipse cx="320.6" cy="260.3" rx="2.1" ry="1.1" transform="rotate(253 320.6 260.3)" opacity="0.69"/><ellipse cx="335.9" cy="241.6" rx="3.2" ry="1.5" transform="rotate(267 335.9 241.6)" opacity="0.89"/><ellipse cx="333.3" cy="282.0" rx="4.6" ry="1.6" transform="rotate(261 333.3 282.0)" opacity="0.73"/><ellipse cx="300.4" cy="233.6" rx="3.6" ry="1.2" transform="rotate(256 300.4 233.6)" opacity="0.70"/><ellipse cx="323.7" cy="275.9" rx="7.9" ry="0.7" transform="rotate(257 323.7 275.9)" opacity="0.72"/><ellipse cx="304.1" cy="237.9" rx="5.7" ry="1.5" transform="rotate(256 304.1 237.9)" opacity="0.83"/><ellipse cx="321.7" cy="245.7" rx="2.7" ry="1.4" transform="rotate(263 321.7 245.7)" opacity="0.75"/><ellipse cx="312.4" cy="233.2" rx="4.3" ry="0.8" transform="rotate(257 312.4 233.2)" opacity="0.81"/><ellipse cx="302.6" cy="251.0" rx="5.8" ry="1.0" transform="rotate(245 302.6 251.0)" opacity="0.82"/><ellipse cx="290.7" cy="216.8" rx="4.8" ry="1.6" transform="rotate(251 290.7 216.8)" opacity="0.69"/><ellipse cx="339.1" cy="224.2" rx="4.4" ry="1.5" transform="rotate(265 339.1 224.2)" opacity="1.00"/><ellipse cx="310.4" cy="250.0" rx="7.0" ry="1.2" transform="rotate(258 310.4 250.0)" opacity="0.92"/><ellipse cx="314.1" cy="221.1" rx="8.0" ry="0.6" transform="rotate(265 314.1 221.1)" opacity="0.87"/><ellipse cx="330.9" cy="268.0" rx="4.7" ry="1.1" transform="rotate(272 330.9 268.0)" opacity="0.64"/><ellipse cx="327.1" cy="265.7" rx="2.4" ry="1.1" transform="rotate(267 327.1 265.7)" opacity="0.77"/><ellipse cx="330.8" cy="268.9" rx="7.1" ry="1.3" transform="rotate(266 330.8 268.9)" opacity="0.96"/><ellipse cx="295.7" cy="227.1" rx="4.2" ry="0.6" transform="rotate(237 295.7 227.1)" opacity="0.71"/><ellipse cx="331.2" cy="213.3" rx="2.7" ry="0.7" transform="rotate(266 331.2 213.3)" opacity="0.93"/><ellipse cx="334.3" cy="234.5" rx="2.4" ry="1.6" transform="rotate(264 334.3 234.5)" opacity="0.83"/><ellipse cx="325.1" cy="212.7" rx="3.2" ry="1.2" transform="rotate(263 325.1 212.7)" opacity="0.56"/><ellipse cx="317.9" cy="262.1" rx="5.8" ry="0.8" transform="rotate(254 317.9 262.1)" opacity="0.86"/><ellipse cx="320.3" cy="277.4" rx="6.2" ry="1.0" transform="rotate(241 320.3 277.4)" opacity="0.60"/><ellipse cx="317.4" cy="208.2" rx="4.1" ry="0.7" transform="rotate(271 317.4 208.2)" opacity="0.86"/><ellipse cx="307.9" cy="228.2" rx="3.9" ry="0.9" transform="rotate(246 307.9 228.2)" opacity="0.83"/><ellipse cx="331.0" cy="251.8" rx="4.5" ry="1.0" transform="rotate(267 331.0 251.8)" opacity="0.97"/><ellipse cx="327.9" cy="259.3" rx="3.4" ry="1.1" transform="rotate(259 327.9 259.3)" opacity="0.94"/><ellipse cx="331.9" cy="264.5" rx="6.1" ry="1.0" transform="rotate(275 331.9 264.5)" opacity="0.72"/><ellipse cx="319.6" cy="224.8" rx="4.7" ry="0.6" transform="rotate(259 319.6 224.8)" opacity="0.68"/><ellipse cx="335.4" cy="250.2" rx="3.8" ry="1.3" transform="rotate(274 335.4 250.2)" opacity="0.66"/><ellipse cx="310.3" cy="257.8" rx="7.4" ry="0.8" transform="rotate(245 310.3 257.8)" opacity="0.70"/><ellipse cx="332.2" cy="217.0" rx="5.5" ry="1.1" transform="rotate(260 332.2 217.0)" opacity="0.95"/><ellipse cx="326.9" cy="285.1" rx="4.2" ry="1.3" transform="rotate(258 326.9 285.1)" opacity="0.70"/><ellipse cx="338.1" cy="210.5" rx="2.1" ry="1.2" transform="rotate(271 338.1 210.5)" opacity="0.71"/><ellipse cx="314.0" cy="251.3" rx="6.0" ry="1.2" transform="rotate(261 314.0 251.3)" opacity="0.99"/><ellipse cx="303.2" cy="206.9" rx="7.0" ry="1.2" transform="rotate(258 303.2 206.9)" opacity="1.00"/><ellipse cx="328.4" cy="287.2" rx="4.4" ry="1.2" transform="rotate(251 328.4 287.2)" opacity="1.00"/><ellipse cx="323.1" cy="273.4" rx="2.9" ry="0.9" transform="rotate(259 323.1 273.4)" opacity="0.59"/><ellipse cx="328.7" cy="276.5" rx="5.7" ry="1.3" transform="rotate(256 328.7 276.5)" opacity="0.92"/><ellipse cx="328.4" cy="224.9" rx="2.7" ry="1.0" transform="rotate(256 328.4 224.9)" opacity="0.94"/><ellipse cx="335.1" cy="206.5" rx="2.1" ry="0.9" transform="rotate(271 335.1 206.5)" opacity="0.79"/><ellipse cx="331.0" cy="281.9" rx="3.8" ry="1.1" transform="rotate(256 331.0 281.9)" opacity="0.81"/><ellipse cx="344.6" cy="281.1" rx="5.1" ry="0.8" transform="rotate(291 344.6 281.1)" opacity="0.66"/><ellipse cx="348.0" cy="254.0" rx="3.3" ry="1.0" transform="rotate(283 348.0 254.0)" opacity="0.76"/><ellipse cx="356.0" cy="216.5" rx="7.1" ry="0.7" transform="rotate(291 356.0 216.5)" opacity="0.79"/><ellipse cx="362.7" cy="259.6" rx="7.2" ry="1.6" transform="rotate(295 362.7 259.6)" opacity="0.55"/><ellipse cx="353.7" cy="282.2" rx="6.4" ry="1.3" transform="rotate(293 353.7 282.2)" opacity="0.79"/><ellipse cx="342.9" cy="292.0" rx="3.8" ry="1.6" transform="rotate(292 342.9 292.0)" opacity="0.93"/><ellipse cx="344.9" cy="290.6" rx="2.5" ry="0.8" transform="rotate(285 344.9 290.6)" opacity="0.96"/><ellipse cx="356.7" cy="264.8" rx="5.9" ry="1.5" transform="rotate(302 356.7 264.8)" opacity="0.81"/><ellipse cx="375.1" cy="256.9" rx="4.4" ry="0.8" transform="rotate(309 375.1 256.9)" opacity="0.67"/><ellipse cx="356.7" cy="260.9" rx="4.9" ry="0.9" transform="rotate(290 356.7 260.9)" opacity="0.75"/><ellipse cx="347.4" cy="291.3" rx="2.4" ry="1.1" transform="rotate(299 347.4 291.3)" opacity="0.73"/><ellipse cx="346.3" cy="271.9" rx="4.2" ry="0.8" transform="rotate(284 346.3 271.9)" opacity="0.65"/><ellipse cx="371.7" cy="230.4" rx="2.1" ry="0.9" transform="rotate(302 371.7 230.4)" opacity="0.55"/><ellipse cx="382.0" cy="251.6" rx="4.2" ry="1.2" transform="rotate(304 382.0 251.6)" opacity="0.69"/><ellipse cx="370.4" cy="243.2" rx="3.9" ry="1.0" transform="rotate(296 370.4 243.2)" opacity="0.89"/><ellipse cx="343.3" cy="289.2" rx="3.5" ry="0.8" transform="rotate(294 343.3 289.2)" opacity="0.74"/><ellipse cx="371.3" cy="220.1" rx="3.7" ry="1.2" transform="rotate(282 371.3 220.1)" opacity="0.99"/><ellipse cx="366.8" cy="221.1" rx="3.9" ry="1.4" transform="rotate(294 366.8 221.1)" opacity="0.84"/><ellipse cx="347.4" cy="290.4" rx="2.3" ry="1.2" transform="rotate(298 347.4 290.4)" opacity="0.97"/><ellipse cx="349.6" cy="233.9" rx="7.6" ry="1.3" transform="rotate(282 349.6 233.9)" opacity="0.55"/><ellipse cx="368.3" cy="230.2" rx="6.1" ry="1.6" transform="rotate(299 368.3 230.2)" opacity="0.58"/><ellipse cx="370.6" cy="227.0" rx="6.5" ry="0.9" transform="rotate(291 370.6 227.0)" opacity="0.75"/><ellipse cx="346.7" cy="283.0" rx="6.4" ry="0.6" transform="rotate(283 346.7 283.0)" opacity="0.93"/><ellipse cx="371.1" cy="238.0" rx="2.7" ry="0.6" transform="rotate(291 371.1 238.0)" opacity="0.98"/><ellipse cx="378.9" cy="253.1" rx="3.3" ry="1.0" transform="rotate(306 378.9 253.1)" opacity="0.93"/><ellipse cx="352.4" cy="285.0" rx="4.8" ry="0.5" transform="rotate(299 352.4 285.0)" opacity="0.72"/><ellipse cx="385.5" cy="245.4" rx="5.0" ry="1.3" transform="rotate(303 385.5 245.4)" opacity="0.90"/><ellipse cx="350.1" cy="285.9" rx="3.0" ry="1.1" transform="rotate(292 350.1 285.9)" opacity="0.71"/><ellipse cx="348.5" cy="278.7" rx="5.5" ry="1.1" transform="rotate(288 348.5 278.7)" opacity="0.81"/><ellipse cx="368.6" cy="220.7" rx="5.5" ry="1.0" transform="rotate(299 368.6 220.7)" opacity="0.70"/><ellipse cx="359.3" cy="230.8" rx="3.6" ry="1.3" transform="rotate(287 359.3 230.8)" opacity="0.67"/><ellipse cx="348.3" cy="289.9" rx="4.3" ry="1.3" transform="rotate(297 348.3 289.9)" opacity="0.83"/><ellipse cx="380.5" cy="254.2" rx="7.5" ry="1.0" transform="rotate(306 380.5 254.2)" opacity="0.65"/><ellipse cx="354.5" cy="224.7" rx="3.8" ry="1.4" transform="rotate(273 354.5 224.7)" opacity="0.86"/><ellipse cx="367.5" cy="245.8" rx="4.0" ry="0.7" transform="rotate(304 367.5 245.8)" opacity="0.89"/><ellipse cx="355.0" cy="220.2" rx="6.7" ry="0.7" transform="rotate(276 355.0 220.2)" opacity="0.79"/><ellipse cx="353.1" cy="237.1" rx="6.6" ry="1.1" transform="rotate(291 353.1 237.1)" opacity="0.97"/><ellipse cx="364.5" cy="233.2" rx="7.7" ry="1.3" transform="rotate(285 364.5 233.2)" opacity="0.94"/><ellipse cx="361.3" cy="228.8" rx="3.5" ry="0.5" transform="rotate(287 361.3 228.8)" opacity="0.66"/><ellipse cx="350.6" cy="266.2" rx="2.8" ry="1.0" transform="rotate(283 350.6 266.2)" opacity="0.68"/><ellipse cx="355.1" cy="269.4" rx="7.2" ry="0.7" transform="rotate(301 355.1 269.4)" opacity="0.93"/><ellipse cx="368.8" cy="242.4" rx="6.4" ry="1.1" transform="rotate(298 368.8 242.4)" opacity="0.96"/><ellipse cx="408.4" cy="254.4" rx="2.3" ry="1.5" transform="rotate(317 408.4 254.4)" opacity="0.90"/><ellipse cx="372.5" cy="288.6" rx="4.2" ry="1.3" transform="rotate(334 372.5 288.6)" opacity="0.78"/><ellipse cx="396.1" cy="268.4" rx="3.4" ry="1.5" transform="rotate(315 396.1 268.4)" opacity="0.97"/><ellipse cx="396.3" cy="256.4" rx="7.4" ry="0.6" transform="rotate(317 396.3 256.4)" opacity="0.60"/><ellipse cx="423.9" cy="244.4" rx="7.2" ry="0.6" transform="rotate(325 423.9 244.4)" opacity="0.58"/><ellipse cx="355.0" cy="301.1" rx="7.9" ry="1.3" transform="rotate(334 355.0 301.1)" opacity="0.90"/><ellipse cx="388.0" cy="265.2" rx="5.2" ry="0.7" transform="rotate(317 388.0 265.2)" opacity="0.71"/><ellipse cx="388.7" cy="269.0" rx="6.2" ry="1.0" transform="rotate(319 388.7 269.0)" opacity="0.59"/><ellipse cx="393.6" cy="277.2" rx="7.8" ry="1.1" transform="rotate(320 393.6 277.2)" opacity="0.69"/><ellipse cx="383.1" cy="286.9" rx="7.6" ry="1.6" transform="rotate(339 383.1 286.9)" opacity="0.97"/><ellipse cx="429.4" cy="274.2" rx="2.1" ry="1.0" transform="rotate(338 429.4 274.2)" opacity="0.86"/><ellipse cx="404.2" cy="272.8" rx="7.6" ry="0.6" transform="rotate(329 404.2 272.8)" opacity="0.98"/><ellipse cx="354.5" cy="299.9" rx="7.2" ry="1.6" transform="rotate(314 354.5 299.9)" opacity="0.56"/><ellipse cx="422.4" cy="266.0" rx="5.1" ry="1.1" transform="rotate(336 422.4 266.0)" opacity="0.91"/><ellipse cx="351.6" cy="302.8" rx="6.8" ry="1.6" transform="rotate(332 351.6 302.8)" opacity="0.73"/><ellipse cx="379.4" cy="281.4" rx="2.1" ry="1.3" transform="rotate(318 379.4 281.4)" opacity="0.81"/><ellipse cx="393.0" cy="270.3" rx="6.0" ry="1.0" transform="rotate(317 393.0 270.3)" opacity="0.95"/><ellipse cx="365.8" cy="289.3" rx="3.5" ry="1.0" transform="rotate(326 365.8 289.3)" opacity="0.70"/><ellipse cx="374.4" cy="290.6" rx="3.6" ry="1.1" transform="rotate(324 374.4 290.6)" opacity="0.94"/><ellipse cx="367.0" cy="289.4" rx="3.8" ry="0.9" transform="rotate(326 367.0 289.4)" opacity="0.85"/><ellipse cx="416.2" cy="262.5" rx="2.5" ry="1.3" transform="rotate(322 416.2 262.5)" opacity="0.65"/><ellipse cx="392.7" cy="289.3" rx="4.2" ry="0.9" transform="rotate(344 392.7 289.3)" opacity="1.00"/><ellipse cx="380.3" cy="275.0" rx="6.7" ry="1.4" transform="rotate(315 380.3 275.0)" opacity="0.91"/><ellipse cx="381.8" cy="277.9" rx="5.6" ry="1.3" transform="rotate(321 381.8 277.9)" opacity="0.92"/><ellipse cx="353.3" cy="302.0" rx="4.3" ry="0.6" transform="rotate(334 353.3 302.0)" opacity="0.61"/><ellipse cx="373.0" cy="294.6" rx="7.8" ry="1.5" transform="rotate(329 373.0 294.6)" opacity="0.97"/><ellipse cx="366.2" cy="295.8" rx="7.7" ry="0.7" transform="rotate(322 366.2 295.8)" opacity="0.86"/><ellipse cx="427.2" cy="265.3" rx="7.7" ry="1.0" transform="rotate(329 427.2 265.3)" opacity="0.60"/><ellipse cx="379.6" cy="292.9" rx="2.4" ry="0.7" transform="rotate(331 379.6 292.9)" opacity="0.57"/><ellipse cx="375.4" cy="280.8" rx="2.7" ry="1.1" transform="rotate(321 375.4 280.8)" opacity="0.81"/><ellipse cx="413.9" cy="263.4" rx="7.7" ry="0.6" transform="rotate(321 413.9 263.4)" opacity="0.58"/><ellipse cx="381.4" cy="288.9" rx="7.5" ry="1.1" transform="rotate(324 381.4 288.9)" opacity="0.70"/><ellipse cx="395.3" cy="267.0" rx="6.8" ry="1.6" transform="rotate(321 395.3 267.0)" opacity="0.82"/><ellipse cx="418.5" cy="257.3" rx="3.1" ry="1.5" transform="rotate(335 418.5 257.3)" opacity="0.56"/><ellipse cx="411.0" cy="259.4" rx="2.3" ry="0.7" transform="rotate(317 411.0 259.4)" opacity="0.88"/><ellipse cx="367.3" cy="285.6" rx="3.3" ry="1.4" transform="rotate(318 367.3 285.6)" opacity="0.84"/><ellipse cx="401.9" cy="303.7" rx="2.1" ry="0.8" transform="rotate(342 401.9 303.7)" opacity="0.67"/><ellipse cx="416.5" cy="309.6" rx="4.8" ry="1.2" transform="rotate(353 416.5 309.6)" opacity="0.71"/><ellipse cx="439.8" cy="321.2" rx="4.5" ry="1.1" transform="rotate(363 439.8 321.2)" opacity="0.70"/><ellipse cx="441.5" cy="299.1" rx="7.6" ry="1.4" transform="rotate(359 441.5 299.1)" opacity="0.62"/><ellipse cx="403.6" cy="334.3" rx="3.7" ry="0.7" transform="rotate(381 403.6 334.3)" opacity="0.66"/><ellipse cx="412.3" cy="300.5" rx="7.7" ry="0.8" transform="rotate(342 412.3 300.5)" opacity="0.86"/><ellipse cx="391.6" cy="316.9" rx="5.0" ry="1.5" transform="rotate(363 391.6 316.9)" opacity="0.72"/><ellipse cx="355.3" cy="314.4" rx="3.6" ry="1.1" transform="rotate(364 355.3 314.4)" opacity="0.76"/><ellipse cx="365.9" cy="314.6" rx="4.9" ry="1.2" transform="rotate(371 365.9 314.6)" opacity="0.68"/><ellipse cx="399.2" cy="300.7" rx="6.8" ry="0.8" transform="rotate(355 399.2 300.7)" opacity="0.91"/><ellipse cx="381.6" cy="324.2" rx="5.0" ry="1.0" transform="rotate(374 381.6 324.2)" opacity="0.98"/><ellipse cx="405.0" cy="314.7" rx="3.7" ry="1.4" transform="rotate(361 405.0 314.7)" opacity="0.70"/><ellipse cx="376.7" cy="309.4" rx="7.0" ry="1.4" transform="rotate(363 376.7 309.4)" opacity="0.96"/><ellipse cx="420.9" cy="330.7" rx="6.3" ry="1.4" transform="rotate(377 420.9 330.7)" opacity="0.63"/><ellipse cx="433.5" cy="304.6" rx="3.5" ry="1.5" transform="rotate(345 433.5 304.6)" opacity="0.78"/><ellipse cx="390.4" cy="323.5" rx="5.7" ry="1.5" transform="rotate(379 390.4 323.5)" opacity="0.84"/><ellipse cx="363.0" cy="316.2" rx="2.7" ry="1.6" transform="rotate(372 363.0 316.2)" opacity="0.69"/><ellipse cx="375.6" cy="318.4" rx="6.5" ry="1.6" transform="rotate(369 375.6 318.4)" opacity="0.61"/><ellipse cx="423.6" cy="292.7" rx="7.2" ry="1.3" transform="rotate(352 423.6 292.7)" opacity="0.94"/><ellipse cx="409.3" cy="334.5" rx="5.8" ry="1.0" transform="rotate(374 409.3 334.5)" opacity="0.71"/><ellipse cx="358.1" cy="312.4" rx="6.8" ry="0.8" transform="rotate(359 358.1 312.4)" opacity="0.90"/><ellipse cx="423.4" cy="316.6" rx="3.9" ry="0.8" transform="rotate(355 423.4 316.6)" opacity="0.84"/><ellipse cx="419.2" cy="337.8" rx="4.0" ry="1.5" transform="rotate(384 419.2 337.8)" opacity="0.68"/><ellipse cx="445.4" cy="324.2" rx="7.8" ry="1.4" transform="rotate(362 445.4 324.2)" opacity="0.68"/><ellipse cx="408.0" cy="315.0" rx="2.2" ry="1.4" transform="rotate(362 408.0 315.0)" opacity="0.76"/><ellipse cx="427.1" cy="302.4" rx="3.2" ry="1.1" transform="rotate(347 427.1 302.4)" opacity="0.70"/><ellipse cx="363.4" cy="310.1" rx="4.1" ry="1.1" transform="rotate(361 363.4 310.1)" opacity="0.84"/><ellipse cx="398.0" cy="312.2" rx="3.4" ry="1.0" transform="rotate(367 398.0 312.2)" opacity="0.60"/><ellipse cx="399.2" cy="321.8" rx="6.6" ry="1.1" transform="rotate(370 399.2 321.8)" opacity="0.97"/><ellipse cx="440.7" cy="300.4" rx="5.2" ry="1.6" transform="rotate(353 440.7 300.4)" opacity="0.64"/><ellipse cx="426.9" cy="291.6" rx="2.9" ry="1.1" transform="rotate(341 426.9 291.6)" opacity="0.87"/><ellipse cx="425.9" cy="306.3" rx="6.6" ry="1.2" transform="rotate(359 425.9 306.3)" opacity="0.76"/><ellipse cx="398.4" cy="301.7" rx="4.8" ry="1.6" transform="rotate(357 398.4 301.7)" opacity="0.58"/><ellipse cx="363.7" cy="312.3" rx="6.2" ry="1.0" transform="rotate(349 363.7 312.3)" opacity="0.74"/><ellipse cx="411.6" cy="326.2" rx="4.4" ry="1.2" transform="rotate(373 411.6 326.2)" opacity="0.83"/><ellipse cx="360.9" cy="316.2" rx="2.8" ry="0.6" transform="rotate(365 360.9 316.2)" opacity="0.56"/><ellipse cx="364.0" cy="313.5" rx="4.8" ry="0.6" transform="rotate(368 364.0 313.5)" opacity="0.93"/><ellipse cx="404.5" cy="318.8" rx="3.9" ry="1.6" transform="rotate(356 404.5 318.8)" opacity="0.69"/><ellipse cx="378.6" cy="322.5" rx="5.1" ry="1.0" transform="rotate(369 378.6 322.5)" opacity="0.95"/><ellipse cx="382.4" cy="321.7" rx="6.2" ry="1.0" transform="rotate(367 382.4 321.7)" opacity="0.75"/><ellipse cx="401.4" cy="308.7" rx="5.7" ry="1.0" transform="rotate(351 401.4 308.7)" opacity="0.90"/><ellipse cx="401.8" cy="314.4" rx="7.3" ry="1.0" transform="rotate(358 401.8 314.4)" opacity="0.95"/><ellipse cx="445.8" cy="335.6" rx="4.4" ry="1.2" transform="rotate(376 445.8 335.6)" opacity="0.68"/><ellipse cx="422.3" cy="339.3" rx="5.9" ry="1.2" transform="rotate(375 422.3 339.3)" opacity="0.84"/><ellipse cx="379.4" cy="320.6" rx="5.2" ry="1.6" transform="rotate(366 379.4 320.6)" opacity="0.87"/><ellipse cx="357.4" cy="314.0" rx="6.6" ry="0.8" transform="rotate(362 357.4 314.0)" opacity="0.65"/><ellipse cx="393.9" cy="331.1" rx="3.2" ry="1.5" transform="rotate(368 393.9 331.1)" opacity="0.81"/><ellipse cx="432.1" cy="335.7" rx="4.3" ry="1.1" transform="rotate(377 432.1 335.7)" opacity="0.89"/><ellipse cx="427.8" cy="320.2" rx="3.5" ry="1.3" transform="rotate(365 427.8 320.2)" opacity="0.79"/></g>
<g fill="#f6d838" opacity="0.85"><circle cx="460.4" cy="304.2" r="1.1"/><circle cx="273.2" cy="433.3" r="1.3"/><circle cx="313.4" cy="444.6" r="1.0"/><circle cx="205.9" cy="318.4" r="1.0"/><circle cx="437.5" cy="232.2" r="0.8"/><circle cx="378.4" cy="192.3" r="0.7"/><circle cx="230.7" cy="233.9" r="1.0"/><circle cx="465.0" cy="307.2" r="1.3"/><circle cx="253.2" cy="421.3" r="0.7"/><circle cx="292.1" cy="440.8" r="1.1"/><circle cx="394.9" cy="200.1" r="0.8"/><circle cx="250.8" cy="416.6" r="0.6"/><circle cx="240.0" cy="408.5" r="0.7"/><circle cx="283.0" cy="439.4" r="1.3"/><circle cx="333.7" cy="442.3" r="0.7"/><circle cx="448.5" cy="383.2" r="1.1"/><circle cx="321.7" cy="444.9" r="1.1"/><circle cx="465.6" cy="338.1" r="1.2"/><circle cx="365.5" cy="443.6" r="1.1"/><circle cx="263.4" cy="429.6" r="0.8"/><circle cx="206.1" cy="335.6" r="0.9"/><circle cx="383.8" cy="192.8" r="1.0"/><circle cx="461.3" cy="304.0" r="0.8"/><circle cx="240.4" cy="227.4" r="1.3"/><circle cx="262.8" cy="424.1" r="0.9"/><circle cx="396.9" cy="195.1" r="1.1"/><circle cx="394.9" cy="428.6" r="1.1"/><circle cx="362.0" cy="446.3" r="1.2"/><circle cx="352.6" cy="442.7" r="0.8"/><circle cx="308.7" cy="190.5" r="1.1"/><circle cx="457.6" cy="366.1" r="1.0"/><circle cx="223.5" cy="251.1" r="0.6"/><circle cx="251.5" cy="422.8" r="1.0"/><circle cx="415.6" cy="218.1" r="0.7"/><circle cx="465.3" cy="331.9" r="0.7"/><circle cx="314.7" cy="445.8" r="1.1"/><circle cx="276.1" cy="431.9" r="0.8"/><circle cx="213.4" cy="265.8" r="0.9"/><circle cx="334.4" cy="443.4" r="0.8"/><circle cx="461.9" cy="327.6" r="1.0"/><circle cx="318.6" cy="440.8" r="1.2"/><circle cx="204.8" cy="339.8" r="0.8"/><circle cx="434.8" cy="227.5" r="1.0"/><circle cx="261.9" cy="202.5" r="1.0"/><circle cx="222.5" cy="381.9" r="1.0"/><circle cx="204.8" cy="340.2" r="1.0"/><circle cx="365.9" cy="183.5" r="0.8"/><circle cx="461.3" cy="332.4" r="0.6"/><circle cx="371.5" cy="187.9" r="0.8"/><circle cx="382.1" cy="440.1" r="1.2"/><circle cx="279.7" cy="193.0" r="1.1"/><circle cx="208.8" cy="351.1" r="1.0"/><circle cx="432.8" cy="221.7" r="1.2"/><circle cx="398.3" cy="205.6" r="0.8"/><circle cx="462.8" cy="290.7" r="1.0"/><circle cx="284.1" cy="439.7" r="1.0"/><circle cx="460.0" cy="306.8" r="1.3"/><circle cx="460.5" cy="325.2" r="0.9"/><circle cx="252.2" cy="216.8" r="1.0"/><circle cx="454.5" cy="266.0" r="1.1"/><circle cx="223.0" cy="242.5" r="0.7"/><circle cx="201.9" cy="344.8" r="1.1"/><circle cx="360.5" cy="442.1" r="1.0"/><circle cx="265.2" cy="427.2" r="1.0"/><circle cx="460.9" cy="328.8" r="1.1"/><circle cx="361.7" cy="438.1" r="1.1"/><circle cx="265.3" cy="431.7" r="1.0"/><circle cx="439.9" cy="393.2" r="0.8"/><circle cx="386.0" cy="192.0" r="1.1"/><circle cx="451.8" cy="358.9" r="1.2"/><circle cx="414.8" cy="413.4" r="0.6"/><circle cx="401.1" cy="426.4" r="1.3"/><circle cx="277.8" cy="430.4" r="1.2"/><circle cx="386.5" cy="435.8" r="1.0"/><circle cx="449.6" cy="264.5" r="1.0"/><circle cx="234.0" cy="404.6" r="0.8"/><circle cx="305.6" cy="189.7" r="0.9"/><circle cx="459.4" cy="289.1" r="0.8"/><circle cx="448.8" cy="248.7" r="0.6"/><circle cx="383.4" cy="432.8" r="0.8"/><circle cx="408.0" cy="204.3" r="1.3"/><circle cx="269.5" cy="198.7" r="0.9"/><circle cx="306.9" cy="186.3" r="0.6"/><circle cx="203.8" cy="321.0" r="1.0"/><circle cx="453.9" cy="352.6" r="1.3"/><circle cx="244.2" cy="408.1" r="0.7"/><circle cx="220.5" cy="240.3" r="0.7"/><circle cx="202.5" cy="314.3" r="1.1"/><circle cx="215.7" cy="263.5" r="0.7"/><circle cx="313.4" cy="189.3" r="1.2"/><circle cx="458.6" cy="341.2" r="0.9"/><circle cx="407.1" cy="204.7" r="1.1"/><circle cx="342.7" cy="181.6" r="0.6"/><circle cx="391.6" cy="201.0" r="0.7"/><circle cx="456.3" cy="344.0" r="1.2"/><circle cx="240.5" cy="400.8" r="0.6"/><circle cx="408.6" cy="206.0" r="1.2"/><circle cx="457.1" cy="344.1" r="0.8"/><circle cx="379.5" cy="433.0" r="0.7"/><circle cx="252.3" cy="215.9" r="0.7"/><circle cx="207.0" cy="285.8" r="0.7"/><circle cx="214.2" cy="260.1" r="0.9"/><circle cx="208.7" cy="334.8" r="1.0"/><circle cx="378.6" cy="435.8" r="0.6"/><circle cx="433.9" cy="229.0" r="0.9"/><circle cx="202.8" cy="279.3" r="0.7"/><circle cx="234.5" cy="403.5" r="0.9"/><circle cx="297.3" cy="184.4" r="0.6"/><circle cx="305.8" cy="440.4" r="1.1"/><circle cx="361.9" cy="184.6" r="1.2"/><circle cx="384.6" cy="434.0" r="1.2"/><circle cx="345.9" cy="188.0" r="1.3"/><circle cx="325.5" cy="180.1" r="0.9"/><circle cx="226.6" cy="231.1" r="1.2"/><circle cx="214.1" cy="251.7" r="1.3"/><circle cx="404.0" cy="202.2" r="1.3"/><circle cx="414.0" cy="416.6" r="1.0"/><circle cx="424.1" cy="413.0" r="0.6"/><circle cx="244.6" cy="221.3" r="0.8"/><circle cx="233.3" cy="234.9" r="0.9"/><circle cx="418.3" cy="208.3" r="0.8"/><circle cx="245.2" cy="413.9" r="0.7"/><circle cx="408.2" cy="210.5" r="1.0"/><circle cx="266.4" cy="421.1" r="0.6"/><circle cx="462.8" cy="316.1" r="0.8"/><circle cx="465.7" cy="307.3" r="0.6"/><circle cx="306.3" cy="189.1" r="0.9"/><circle cx="310.5" cy="181.9" r="1.3"/><circle cx="219.9" cy="376.1" r="0.9"/><circle cx="282.3" cy="437.7" r="0.9"/><circle cx="283.2" cy="197.3" r="1.1"/><circle cx="458.7" cy="288.0" r="1.0"/><circle cx="399.8" cy="422.1" r="0.9"/><circle cx="387.8" cy="436.3" r="1.0"/><circle cx="271.5" cy="193.8" r="0.6"/><circle cx="436.5" cy="387.7" r="0.9"/><circle cx="393.4" cy="195.9" r="1.0"/><circle cx="413.8" cy="212.6" r="0.7"/><circle cx="254.0" cy="216.4" r="0.8"/><circle cx="458.9" cy="338.3" r="0.6"/><circle cx="208.7" cy="289.4" r="1.0"/><circle cx="391.7" cy="198.9" r="0.7"/><circle cx="270.2" cy="197.2" r="1.2"/><circle cx="209.2" cy="270.5" r="1.2"/><circle cx="273.6" cy="192.7" r="0.8"/><circle cx="353.7" cy="183.7" r="0.9"/><circle cx="464.0" cy="323.3" r="0.8"/><circle cx="228.2" cy="236.4" r="1.0"/><circle cx="452.2" cy="360.5" r="1.0"/><circle cx="277.2" cy="190.8" r="1.2"/><circle cx="301.0" cy="440.9" r="1.0"/><circle cx="376.7" cy="192.0" r="1.2"/><circle cx="204.2" cy="327.6" r="0.9"/><circle cx="248.6" cy="420.7" r="0.6"/><circle cx="231.1" cy="389.3" r="1.1"/><circle cx="408.0" cy="418.0" r="0.9"/><circle cx="226.4" cy="234.6" r="0.9"/><circle cx="297.2" cy="439.0" r="1.2"/><circle cx="362.4" cy="437.3" r="1.2"/><circle cx="206.9" cy="328.1" r="0.7"/><circle cx="436.6" cy="229.7" r="0.6"/><circle cx="275.4" cy="200.3" r="0.9"/><circle cx="233.6" cy="236.9" r="1.3"/><circle cx="268.5" cy="424.1" r="1.1"/><circle cx="431.3" cy="394.5" r="1.1"/><circle cx="200.9" cy="339.7" r="1.2"/><circle cx="367.6" cy="436.3" r="1.0"/><circle cx="206.7" cy="338.3" r="1.2"/><circle cx="367.7" cy="442.4" r="0.7"/><circle cx="453.7" cy="251.9" r="1.0"/></g>
<g fill="#fffbe6"><polygon points="332.8,319.4 354.0,325.6 381.0,333.1 448.1,358.7 449.1,356.1 382.1,330.5 357.0,318.0 337.2,308.6"/><polygon points="329.9,317.0 342.7,334.5 359.6,356.5 396.6,416.7 399.0,415.3 362.0,355.1 349.9,330.3 340.1,311.0"/><polygon points="329.0,314.1 331.2,335.5 334.5,362.8 335.7,433.0 338.5,432.9 337.3,362.7 339.6,335.4 341.0,313.9"/><polygon points="329.7,311.3 321.0,331.0 310.3,356.4 276.5,418.4 279.0,419.7 312.8,357.7 328.4,334.9 340.3,316.7"/><polygon points="332.8,308.5 313.0,317.9 287.8,330.2 220.6,355.4 221.6,357.9 288.8,332.7 316.0,325.5 337.2,319.5"/><polygon points="336.7,308.4 315.1,303.9 287.5,298.8 218.5,278.7 217.7,281.3 286.7,301.4 312.7,311.8 333.3,319.6"/><polygon points="340.1,310.9 327.1,293.6 310.1,271.7 272.4,211.9 270.1,213.3 307.7,273.1 319.9,297.9 329.9,317.1"/><polygon points="341.0,314.6 341.5,293.1 341.6,265.7 349.1,195.8 346.4,195.6 338.8,265.4 333.1,292.2 329.0,313.4"/><polygon points="339.5,317.8 352.6,300.5 368.9,278.1 416.1,225.1 414.0,223.3 366.7,276.3 346.3,295.1 330.5,310.2"/><polygon points="337.0,319.5 357.2,310.9 382.7,299.4 450.8,276.6 449.9,274.0 381.8,296.8 354.4,303.1 333.0,308.5"/></g>
<circle cx="335" cy="314" r="17" fill="url(#star)"/>
<path fill="url(#dome)" filter="url(#pores)" d="M264.0,252.0C259.4,249.2 262.5,244.3 262.5,240.0C262.5,235.7 262.8,231.7 264.0,226.0C265.2,220.3 267.3,212.3 270.0,206.0C272.7,199.7 276.3,194.0 280.0,188.0C283.7,182.0 287.7,175.7 292.0,170.0C296.3,164.3 301.3,158.3 306.0,154.0C310.7,149.7 315.3,146.3 320.0,144.0C324.7,141.7 327.7,140.7 334.0,140.0C340.3,139.3 352.2,139.1 358.0,140.0C363.8,140.9 365.3,143.4 368.7,145.6C372.1,147.8 375.1,150.4 378.5,153.3C381.9,156.2 385.8,159.7 389.0,162.9C392.2,166.1 395.0,169.3 397.5,172.5C400.0,175.7 401.9,178.8 404.0,182.0C406.1,185.2 408.2,188.4 410.0,191.6C411.8,194.8 413.3,198.0 414.7,201.2C416.1,204.4 417.4,205.9 418.5,211.0C419.6,216.1 420.3,225.5 421.0,232.0C421.7,238.5 422.7,245.3 422.5,250.0C422.3,254.7 422.1,257.6 420.0,260.0C417.9,262.4 413.7,263.6 410.0,264.5C406.3,265.4 406.3,265.8 398.0,265.5C389.7,265.2 373.0,263.9 360.0,263.0C347.0,262.1 331.7,261.0 320.0,260.0C308.3,259.0 299.3,258.3 290.0,257.0C280.7,255.7 268.6,254.8 264.0,252.0Z"/>
<ellipse cx="350" cy="160" rx="32" ry="15" fill="#fbeaa0" opacity="0.45" filter="url(#blur3)"/>
<path fill="#efbc3a" d="M327,141 C327,131 333,123 344,123 C355,123 360,131 361,141 Z"/>
<path d="M308.5,104.5 C316,110 324,116 331,123" stroke="#45853a" stroke-width="6.5" fill="none" stroke-linecap="round"/>
<path d="M307,103 C315,108 322,113 328,119" stroke="#7ab66a" stroke-width="1.3" fill="none" opacity="0.6"/>
<path fill="url(#leaf1)" d="M305,128 C296,128 283,129 270,133 C256,138 244,146 236,156 C228,166 223,180 223,192 C223,198 224,204 224,210 C232,207 238,203 243,200 C252,195 260,188 270,178 C280,168 287,158 293,146 C298,138 302,133 305,128 Z"/>
<path d="M304,129 C285,150 258,180 225,208" stroke="#84b88c" stroke-width="0.9" fill="none" opacity="0.55"/>
<path fill="url(#leaf2)" d="M314,118 C321,117 327,128 329,146 C330,162 326,178 320,192 C310,191 295,187 284,181 C284,168 288,152 296,139 C302,129 308,120 314,118 Z"/>
<path d="M316,119 C318,140 318,165 319,190" stroke="#a8d4ae" stroke-width="0.9" fill="none" opacity="0.45"/>
</svg>

</div>
<div class="a" id="menubar">
  <div class="t" style="left:5px;top:4px;font-size:12.5px;font-weight:bold;color:#6ba3d6;letter-spacing:-0.2px">Ps</div>
  <div class="t" style="left:32.5px">File</div>
  <div class="t" style="left:56px">Edit</div>
  <div class="t" style="left:81px">Image</div>
  <div class="t" style="left:115px">Layer</div>
  <div class="t" style="left:146px">Type</div>
  <div class="t" style="left:175px">Select</div>
  <div class="t" style="left:208px">Filter</div>
  <div class="t" style="left:237px">3D</div>
  <div class="t" style="left:259px">View</div>
  <div class="t" style="left:288px">Window</div>
  <div class="t" style="left:330px">Help</div>
  <svg class="a" style="left:802px;top:0" width="72" height="14" viewBox="802 0 72 14">
    <path d="M803,0 V10 Q803,13 806,13 H869 Q872,13 872,10 V0" fill="#505050" stroke="#3a3a3a"/>
    <path d="M804,1 V10 Q804,12 806,12 H869 Q871,12 871,10 V1" fill="none" stroke="#5e5e5e" stroke-width="0.6"/>
    <line x1="822.5" y1="0" x2="822.5" y2="13" stroke="#3a3a3a"/>
    <line x1="840.5" y1="0" x2="840.5" y2="13" stroke="#3a3a3a"/>
    <rect x="810" y="7" width="6" height="2" fill="#f0f0f0"/>
    <rect x="828.5" y="4" width="6" height="4.5" fill="none" stroke="#f0f0f0" stroke-width="1.4"/>
    <path d="M853,4 L858.5,9 M858.5,4 L853,9" stroke="#f0f0f0" stroke-width="1.6"/>
  </svg>
</div>
<div class="a" id="optbar">
  <svg class="a" style="left:0;top:0" width="875" height="23" viewBox="0 20 875 23">
    <g fill="#3e3e3e"><rect x="4" y="24" width="1" height="16"/><rect x="6" y="24" width="1" height="16"/></g>
    <g fill="#cfcfcf">
      <path d="M15,26 L15,35 L17.5,33 L19.5,37 L21,36 L19,32.3 L22,32 Z"/>
      <path d="M24,32 V38 M21,35 H27" stroke="#cfcfcf" stroke-width="0.9"/>
      <path d="M34,30.5 H38 L36,33 Z"/>
    </g>
  </svg>
  <div class="sep" style="left:41px"></div>
  <div class="cb" style="left:47px;top:7px"></div>
  <div class="t" style="left:59.5px;top:8px">Auto-Select:</div>
  <div class="a" style="left:106px;top:5.5px;width:37.5px;height:13px;background:linear-gradient(#686868,#5a5a5a);border:1px solid #3a3a3a;border-radius:2px;box-shadow:inset 0 1px 0 #727272"></div>
  <div class="t" style="left:110px;top:8px;color:#e0e0e0">Group</div>
  <svg class="a" style="left:134px;top:7px" width="6" height="9"><path d="M1,3.5 L3,1 L5,3.5 Z M1,5.5 L3,8 L5,5.5 Z" fill="#e0e0e0"/></svg>
  <div class="sep" style="left:148px"></div>
  <div class="cb" style="left:156.5px;top:7px"></div>
  <div class="t" style="left:169px;top:8px">Show Transform Controls</div>
  <div class="sep" style="left:254px"></div>
  <svg class="a" style="left:0;top:0" width="875" height="23" viewBox="0 20 875 23">
    <g fill="#8a8a8a" stroke="#6a6a6a" stroke-width="0.6">
      <rect x="264" y="27" width="1.2" height="10" stroke="none"/><rect x="266" y="29" width="3" height="7"/><rect x="270" y="29.5" width="3.5" height="4"/>
      <rect x="283.5" y="27" width="1.2" height="10" stroke="none"/><rect x="281" y="29" width="3" height="7"/><rect x="285.5" y="30" width="4" height="4"/>
      <rect x="297" y="36" width="11" height="1.2" stroke="none"/><rect x="298.5" y="27.5" width="3" height="8"/><rect x="302.5" y="31" width="4" height="4.5"/>
      <rect x="318.5" y="27" width="1.2" height="10" stroke="none"/><rect x="320" y="28.5" width="8" height="3.5"/><rect x="320" y="33" width="8" height="3"/>
      <rect x="339.5" y="26" width="1.2" height="11" stroke="none"/><rect x="336" y="28.5" width="8" height="3.5"/><rect x="335.5" y="33" width="9" height="3"/>
      <rect x="359.5" y="27" width="1.2" height="10" stroke="none"/><rect x="351.5" y="28.5" width="8" height="3.5"/><rect x="351.5" y="33" width="8" height="3"/>
      <rect x="378" y="27" width="12" height="1.2" stroke="none"/><rect x="380" y="29" width="8" height="3.5"/><rect x="379" y="33.5" width="10" height="3"/>
      <rect x="396" y="32" width="12" height="1.2" stroke="none"/><rect x="398" y="28.5" width="8" height="3"/><rect x="397" y="34" width="10" height="3"/>
      <rect x="413" y="36.5" width="12" height="1.2" stroke="none"/><rect x="415" y="28.5" width="8" height="3"/><rect x="414" y="32.5" width="10" height="3"/>
      <rect x="433" y="27" width="1.2" height="10" stroke="none"/><rect x="435" y="28" width="3" height="9"/><rect x="439" y="30" width="3" height="5"/>
      <rect x="453.5" y="27" width="1.2" height="10" stroke="none"/><rect x="450" y="28.5" width="3" height="8"/><rect x="455.5" y="30" width="3" height="5"/>
      <rect x="474" y="27" width="1.2" height="10" stroke="none"/><rect x="470" y="28.5" width="3" height="8"/><rect x="466.5" y="30" width="3" height="5"/>
      <rect x="492" y="27" width="12" height="1.2" stroke="none"/><rect x="493" y="29" width="3.5" height="8"/><rect x="499" y="29" width="3.5" height="8"/>
    </g>
  </svg>
  <div class="sep" style="left:369px"></div>
  <div class="sep" style="left:484px"></div>
  <div class="sep" style="left:512.5px;top:0;height:23px"></div>
  <div class="t" style="left:520.5px;top:8px;color:#c8c8c8">3D Mode:</div>
  <svg class="a" style="left:0;top:0" width="875" height="23" viewBox="0 20 875 23">
    <g fill="none" stroke="#8a8a8a" stroke-width="1">
      <path d="M561,33 a3.5,3 0 0 1 5,-3.5 a3,3 0 0 1 5,2.5 a2.5,2.5 0 0 1 -1,4.5 h-7 a2.5,2.5 0 0 1 -2,-3.5z"/>
      <circle cx="582.5" cy="32" r="5"/><circle cx="582.5" cy="32" r="2.5"/>
      <path d="M599,26 V38 M593,32 H605 M597,28 l2,-2 l2,2 M597,36 l2,2 l2,-2 M595,30 l-2,2 l2,2 M603,30 l2,2 l-2,2"/>
      <path d="M615,28 V37 M610,32 H621 M612,30 h6 v4 h-6z"/>
      <path d="M626,29.5 h6 v5 h-6z M632,32 l4,-3.5 M632,32 l4,3.5"/>
    </g>
  </svg>
  <div class="a" style="left:788px;top:6.5px;width:81.5px;height:13px;background:linear-gradient(#626262,#545454);border:1px solid #363636;border-radius:2px;box-shadow:inset 0 1px 0 #6a6a6a"></div>
  <div class="t" style="left:792.5px;top:8px;color:#e8e8e8">Essentials</div>
  <svg class="a" style="left:861px;top:8.5px" width="6" height="9"><path d="M1,3.5 L3,1 L5,3.5 Z M1,5.5 L3,8 L5,5.5 Z" fill="#e0e0e0"/></svg>
</div>
<div class="a" id="tabbar">
  <div class="tab" style="left:0;width:263px;background:#4e4e4e;border-top-color:#5a5a5a"><div class="t" style="left:6.5px;color:#f0f0f0;-webkit-text-stroke:0.15px #f0f0f0">Hiệu ứng chém trái cây trong Photoshop @ 65,9% (Layer 1, RGB/8) *</div><div class="t" style="left:253px;top:2px;font-size:9px;color:#e0e0e0">×</div></div>
  <div class="tab" style="left:263px;width:220px"><div class="t" style="left:7px;letter-spacing:-0.08px">snapedit_1704706206236.png @ 100% (Layer 0, RGB/8) *</div><div class="t" style="left:211px;top:2px;font-size:9px">×</div></div>
  <div class="tab" style="left:483px;width:200px"><div class="t" style="left:8px">x.jpg @ 66,7% (Layer 0, RGB/8)</div></div>
</div>
<div class="a" id="toolbar">
<svg class="a" style="left:-1px;top:0" width="28" height="478" viewBox="0 44 28 478">
  <rect x="0" y="44" width="27" height="8" fill="#353535"/>
  <path d="M4,46.5 l2,1.5 l-2,1.5z M7,46.5 l2,1.5 l-2,1.5z" fill="#cfcfcf"/>
  <rect x="0" y="52" width="27" height="1" fill="#5e5e5e"/>
  <rect x="7" y="55.5" width="13" height="1" fill="#3c3c3c"/>
  <rect x="7" y="56.5" width="13" height="1" fill="#626262"/>
  <rect x="3" y="63.5" width="21" height="15.5" fill="#3a3a3a" stroke="#303030" stroke-width="0.8"/>
  <g fill="#d0d0d0" stroke="none">
    <!-- move -->
    <path d="M8,66 L8,75 L10.3,73 L12,76.5 L13.4,75.8 L11.7,72.4 L14.5,72.2 Z"/>
    <path d="M17,70 V78 M13.5,74 H20.5" stroke="#d0d0d0" stroke-width="0.9"/>
  </g>
  <g fill="none" stroke="#bdbdbd" stroke-width="1">
    <!-- marquee -->
    <rect x="8.5" y="84.5" width="10" height="9" stroke-dasharray="2,1.3"/>
    <!-- lasso -->
    <ellipse cx="13.5" cy="104.5" rx="5.5" ry="3.5"/>
    <path d="M10,107.5 q-1,2 1,3"/>
    <!-- quick select -->
    <path d="M9,122 v5 h5" stroke-dasharray="1.5,1"/>
    <path d="M11,127 L18,120" stroke-width="2.2"/>
    <!-- crop -->
    <path d="M11,135 V145 H20 M8,138 H17 V147" stroke-width="1.4"/>
    <!-- eyedropper -->
    <path d="M9,165 L16,157" stroke-width="1.4"/>
    <path d="M15,155 l3,3" stroke-width="2.4"/>
  </g>
  <rect x="5" y="168.5" width="17" height="1" fill="#444"/>
  <g fill="#bdbdbd">
    <!-- healing -->
    <rect x="9" y="175" width="9" height="8" rx="2" fill="none" stroke="#bdbdbd" stroke-width="1.2" stroke-dasharray="1.2,0.8"/>
    <rect x="10.5" y="176.5" width="6" height="5" />
    <!-- brush -->
    <path d="M18,191 L12,198 L13.5,199.5 Z"/>
    <ellipse cx="11" cy="200.5" rx="2.5" ry="1.6"/>
    <!-- stamp -->
    <rect x="9" y="215.5" width="10" height="2.5"/>
    <rect x="12.5" y="209" width="3" height="6"/>
    <circle cx="14" cy="209" r="2"/>
    <rect x="8" y="219" width="12" height="1"/>
    <!-- history brush -->
    <path d="M18,226 L12,233 L13.5,234.5 Z"/>
    <ellipse cx="11" cy="235.5" rx="2.5" ry="1.6"/>
    <path d="M8,230 l4,-3 l1,1.5 l-4,3z"/>
    <!-- eraser -->
    <path d="M9,249 l6,-5 l4,3 l-6,5z"/>
    <rect x="11" y="252" width="8" height="1"/>
    <!-- gradient -->
    <rect x="8.5" y="262" width="11" height="10" fill="none" stroke="#c8c8c8" stroke-width="1"/>
  </g>
  <defs><linearGradient id="tg" x1="0" x2="1"><stop offset="0" stop-color="#333"/><stop offset="1" stop-color="#ddd"/></linearGradient></defs>
  <rect x="9" y="262.5" width="10" height="9" fill="url(#tg)"/>
  <g fill="#bdbdbd">
    <!-- blur drop -->
    <path d="M13.5,280 C11,284 10,286 10,288 A3.5,3.5 0 0 0 17,288 C17,286 16,284 13.5,280Z"/>
    <!-- dodge -->
    <circle cx="12" cy="300" r="3.2"/>
    <path d="M13.5,302 L18,306" stroke="#bdbdbd" stroke-width="1.6"/>
  </g>
  <rect x="5" y="312.5" width="17" height="1" fill="#444"/>
  <g fill="#bdbdbd">
    <!-- pen -->
    <path d="M9,328 L10,321 L16,316 L19,319 L14,325 Z"/>
    <!-- type -->
    <path d="M8,334.5 h11 v2 h-1 v-0.8 h-3.5 v8.3 h1.5 v1 h-5 v-1 h1.5 v-8.3 h-3.5 v0.8 h-1z"/>
    <!-- path select -->
    <path d="M9.5,351 L9.5,363 L12.5,360 L14.5,364 L16,363.2 L14.2,359.5 L17.5,359.2 Z" fill="#2a2a2a" stroke="#bdbdbd" stroke-width="1"/>
    <!-- ellipse -->
    <ellipse cx="13.5" cy="375.5" rx="5.5" ry="4" fill="#8a8a8a" stroke="#bdbdbd"/>
  </g>
  <rect x="5" y="385" width="17" height="1" fill="#444"/>
  <g fill="#bdbdbd">
    <!-- hand -->
    <path d="M9,396 V392 h1.3 v3 V390 h1.3 v5 V389.5 h1.3 v5.5 V390.5 h1.3 v5 l1.5,-1.5 l1.2,0.7 l-3,4.5 h-4 z"/>
    <!-- zoom -->
    <circle cx="12.5" cy="411.5" r="3.3" fill="none" stroke="#bdbdbd" stroke-width="1.3"/>
    <path d="M14.8,413.8 L18,417" stroke="#bdbdbd" stroke-width="1.8"/>
    <!-- small default colors -->
    <rect x="4.5" y="424" width="4" height="4" fill="#ddd"/>
    <rect x="3" y="422.5" width="4" height="4" fill="#111" stroke="#ccc" stroke-width="0.6"/>
    <path d="M18,423.5 a3,3 0 0 1 3,3 M17,422.5 l1.5,1 l-1.5,1 M21,428 l1,-1.5 l1,1.5" fill="none" stroke="#bdbdbd" stroke-width="0.9"/>
  </g>
  <rect x="10.5" y="440.5" width="12.5" height="12.5" fill="#fff" stroke="#cfcfcf" stroke-width="0.8"/>
  <rect x="4.5" y="434.5" width="11.5" height="12" fill="#000" stroke="#d5d5d5" stroke-width="1"/>
  <g fill="none" stroke="#c0c0c0" stroke-width="1.1">
    <rect x="8.5" y="460" width="10" height="8"/>
    <circle cx="13.5" cy="464" r="2.4"/>
    <rect x="10.5" y="477.5" width="8" height="6"/>
    <rect x="7.5" y="480.5" width="8" height="6" fill="#535353"/>
  </g>
  <g fill="#d5d5d5">
    <path d="M21,94 h2 v-2z M21,111 h2 v-2z M21,129 h2 v-2z M21,146 h2 v-2z M21,164 h2 v-2z M21,184 h2 v-2z M21,202 h2 v-2z M21,219 h2 v-2z M21,237 h2 v-2z M21,254 h2 v-2z M21,273 h2 v-2z M21,291 h2 v-2z M21,307 h2 v-2z M21,328 h2 v-2z M21,345 h2 v-2z M21,362 h2 v-2z M21,381 h2 v-2z M21,401 h2 v-2z M21,488 h2 v-2z"/>
  </g>
</svg>
</div>
<div class="a" id="status">
  <div class="a" style="left:0;top:0;width:33px;height:10px;background:#3e3e3e"></div>
  <div class="a" style="left:33px;top:0;width:134px;height:10px;background:#4a4a4a"></div>
  <div class="t" style="left:2px">65,86%</div>
  <svg class="a" style="left:33px;top:1px" width="10" height="9"><circle cx="5" cy="4.5" r="3.6" fill="#bdbdbd"/><path d="M4,2.5 v4 h2.2" stroke="#444" stroke-width="1.2" fill="none"/></svg>
  <div class="t" style="left:79.5px">Doc: 2,75M/6,97M</div>
  <svg class="a" style="left:164px;top:1px" width="16" height="9"><path d="M3,1.5 L7.5,4.5 L3,7.5Z" fill="#e8e8e8"/><path d="M14,3 L11.5,4.5 L14,6Z" fill="#cfcfcf"/></svg>
  <div class="a" style="left:324px;top:1px;width:194px;height:9px;background:linear-gradient(#a0a0a0,#7e7e7e);border-radius:1px"></div>
</div>
<div class="a" id="panels">
<svg class="a" style="left:0;top:0" width="74" height="478" viewBox="801 44 74 478">
  <rect x="801" y="44" width="74" height="8" fill="#353535"/>
  <path d="M865,46.5 l2,1.5 l-2,1.5z M868,46.5 l2,1.5 l-2,1.5z" fill="#cfcfcf"/>
  <!-- color panel tab bar -->
  <rect x="801" y="52" width="74" height="12" fill="#454545"/>
  <rect x="801" y="52" width="74" height="1" fill="#2e2e2e"/>
  <rect x="801" y="63.5" width="74" height="1" fill="#3a3a3a"/>
  <path d="M862,56.5 h3.5 l-1.75,2z" fill="#ddd"/><rect x="866" y="55" width="5" height="5" fill="#9a9a9a"/>
  <!-- color panel content -->
  <rect x="801" y="71" width="19" height="3" fill="#e01414" rx="1"/>
  <rect x="801" y="87" width="19" height="3" fill="#18d018" rx="1"/>
  <rect x="801" y="103" width="19" height="3" fill="#1a1ae0" rx="1"/>
  <g fill="#3c3c3c" stroke="#474747" stroke-width="0.6">
    <rect x="824" y="69.5" width="32" height="12"/>
    <rect x="824" y="85.5" width="32" height="12"/>
    <rect x="824" y="101.5" width="32" height="12"/>
  </g>
  <g fill="#e6e6e6" font-family="Liberation Sans" font-size="7.5"><text x="828" y="78.5">0</text><text x="828" y="94.5">0</text><text x="828" y="110.5">0</text></g>
  <defs>
    <linearGradient id="spec" x1="0" x2="1"><stop offset="0" stop-color="#2a70c8"/><stop offset="0.18" stop-color="#3a2090"/><stop offset="0.45" stop-color="#a018a0"/><stop offset="0.7" stop-color="#f01878"/><stop offset="1" stop-color="#ff1010"/></linearGradient>
    <linearGradient id="specv" x1="0" y1="0" x2="0" y2="1"><stop offset="0" stop-color="#fff" stop-opacity="0.85"/><stop offset="0.5" stop-color="#fff" stop-opacity="0"/><stop offset="0.5" stop-color="#000" stop-opacity="0"/><stop offset="1" stop-color="#000" stop-opacity="0.6"/></linearGradient>
  </defs>
  <rect x="801" y="120" width="56" height="10" fill="url(#spec)"/>
  <rect x="801" y="120" width="56" height="10" fill="url(#specv)"/>
  <rect x="857" y="120" width="5" height="5" fill="#fff"/><rect x="857" y="125" width="5" height="5" fill="#000"/>
  <!-- adjustments header -->
  <rect x="801" y="134" width="74" height="12" fill="#454545"/>
  <rect x="801" y="134" width="74" height="1" fill="#2e2e2e"/>
  <rect x="801" y="145.5" width="74" height="1" fill="#3a3a3a"/>
  <path d="M862,138.5 h3.5 l-1.75,2z" fill="#ddd"/><rect x="866" y="137" width="5" height="5" fill="#9a9a9a"/>
  <g fill="none" stroke="#c8c8c8" stroke-width="1">
    <rect x="804.5" y="162.5" width="11" height="9"/>
    <path d="M805,171 L815,163" />
    <path d="M820,162.5 h10 l-5,9z"/>
    <circle cx="803" cy="187" r="3"/>
    <circle cx="818" cy="184.5" r="2.5"/><circle cx="815.5" cy="188.5" r="2.5"/><circle cx="820.5" cy="188.5" r="2.5"/>
    <rect x="828.5" y="181.5" width="11" height="9"/>
    <path d="M828.5,184.5 h11 M828.5,187.5 h11 M832.5,181.5 v9 M836,181.5 v9"/>
    <rect x="804.5" y="199.5" width="11" height="10"/>
    <path d="M804.5,199.5 L815.5,209.5 M815.5,199.5 L804.5,209.5"/>
    <rect x="820.5" y="199.5" width="11" height="10"/>
  </g>
  <rect x="821" y="200" width="10" height="9" fill="url(#tg)" opacity="0.9"/>
  <!-- layers header -->
  <rect x="801" y="216" width="74" height="13" fill="#3e3e3e"/>
  <rect x="801" y="216" width="74" height="1" fill="#2e2e2e"/>
  <rect x="818" y="217" width="1" height="12" fill="#2e2e2e"/>
  <text x="800" y="225.5" font-family="Liberation Sans" font-size="7" fill="#9a9a9a">aths</text>
  <path d="M862,221.5 h3.5 l-1.75,2z" fill="#ddd"/><rect x="866" y="220" width="5" height="5" fill="#9a9a9a"/>
  <rect x="801" y="229" width="74" height="18" fill="#535353"/>
  <g fill="none" stroke="#c8c8c8" stroke-width="1">
    <path d="M802,236 a2.5,3 0 1 1 0,4"/>
    <path d="M815.5,233.5 h7 M819,233.5 v8 M817,241.5 h4"/>
    <rect x="831.5" y="233.5" width="7" height="7"/>
    <path d="M846.5,236 h4 v-2 h2 v7 h-6z"/>
  </g>
  <rect x="867" y="232" width="5" height="5" fill="#aaa"/><rect x="867" y="237" width="5" height="5" fill="#2e2e2e"/>
  <rect x="801" y="246.5" width="74" height="1" fill="#3f3f3f"/>
  <text x="806" y="259.5" font-family="Liberation Sans" font-size="7" fill="#e6e6e6">Opacity:</text>
  <rect x="835" y="251" width="23" height="12" fill="#2f2f2f"/>
  <text x="837" y="259.5" font-family="Liberation Sans" font-size="6.8" fill="#e6e6e6">100%</text>
  <rect x="859" y="251.5" width="11" height="11" fill="#6a6a6a" stroke="#444" stroke-width="0.6"/>
  <path d="M862.5,256.5 h4 l-2,2z" fill="#eee"/>
  <rect x="801" y="266.5" width="74" height="1" fill="#3f3f3f"/>
  <text x="821" y="278.5" font-family="Liberation Sans" font-size="7" fill="#e6e6e6">Fill:</text>
  <rect x="835" y="270" width="23" height="12" fill="#2f2f2f"/>
  <text x="837" y="278.5" font-family="Liberation Sans" font-size="6.8" fill="#e6e6e6">100%</text>
  <rect x="859" y="270.5" width="11" height="11" fill="#6a6a6a" stroke="#444" stroke-width="0.6"/>
  <path d="M862.5,275.5 h4 l-2,2z" fill="#eee"/>
  <rect x="801" y="286.5" width="74" height="1" fill="#333"/>
  <!-- layer rows -->
  <rect x="801" y="287" width="63" height="223" fill="#535353"/>
  <rect x="801" y="313" width="63" height="27" fill="#5a6778"/>
  <g fill="#383838">
    <rect x="801" y="312.5" width="63" height="1"/>
    <rect x="801" y="339.5" width="63" height="1"/>
    <rect x="801" y="366" width="63" height="1"/>
    <rect x="801" y="393" width="63" height="1"/>
    <rect x="801" y="419" width="63" height="1"/>
    <rect x="801" y="445.5" width="63" height="1"/>
    <rect x="801" y="473" width="63" height="1"/>
  </g>
  <rect x="801" y="474" width="63" height="36" fill="#4a4a4a"/>
  <text x="801.5" y="410" font-family="Liberation Sans" font-size="8" font-style="italic" fill="#d8d8d8">y</text>
  <text x="801" y="462" font-family="Liberation Sans" font-size="8" font-style="italic" fill="#d8d8d8">d</text>
  <g fill="none" stroke="#c8c8c8" stroke-width="0.9"><rect x="845.5" y="457.5" width="6" height="5"/><path d="M846.5,457.5 v-2 a2,2 0 0 1 4,0 v2"/></g>
  <rect x="864" y="287" width="11" height="223" fill="#3c3c3c"/>
  <rect x="864" y="287" width="1" height="223" fill="#333"/>
  <!-- bottom bar -->
  <rect x="801" y="510" width="74" height="12" fill="#535353"/>
  <rect x="801" y="510" width="74" height="1" fill="#3a3a3a"/>
  <g fill="#bdbdbd">
    <path d="M810,514 h3 l1,1 h5 v6 h-9z"/>
    <path d="M829,514 h6 v7 h-6z" /><path d="M829,514 l3,3 v4 h-3z" fill="#777"/>
    <path d="M846,515 h6 v6 h-6z M845,514 h8 v1 h-8z" fill="none" stroke="#bdbdbd" stroke-width="0.8"/>
  </g>
</svg>
</div>
<div class="a" id="ctx">
  <div class="a" style="left:19px;top:0;width:1px;height:478px;background:#e4e4e4"></div>
  <div class="t" style="top:5px">Blending Options...</div>
  <div class="t d" style="top:20px">Edit Adjustment...</div>
  <div class="s" style="top:35px"></div>
  <div class="t" style="top:41px">Duplicate Layer...</div>
  <div class="t" style="top:55px">Delete Layer</div>
  <div class="s" style="top:70px"></div>
  <div class="t" style="top:76px">Convert to Smart Object</div>
  <div class="s" style="top:90px"></div>
  <div class="t d" style="top:96px">Rasterize Layer</div>
  <div class="t d" style="top:111px">Rasterize Layer Style</div>
  <div class="s" style="top:127px"></div>
  <div class="t d" style="top:131px">Disable Layer Mask</div>
  <div class="t d" style="top:146px">Disable Vector Mask</div>
  <div class="a" style="left:2px;top:158px;width:192px;height:16px;background:linear-gradient(#eef4fc,#e2ecf9);border:1px solid #bcd3f0;border-radius:2px"></div>
  <div class="t" style="top:161px">Create Clipping Mask</div>
  <div class="s" style="top:175px"></div>
  <div class="t d" style="top:181px">Link Layers</div>
  <div class="t d" style="top:196px">Select Linked Layers</div>
  <div class="s" style="top:211px"></div>
  <div class="t d" style="top:217px">Copy Layer Style</div>
  <div class="t d" style="top:231px">Paste Layer Style</div>
  <div class="t d" style="top:247px">Clear Layer Style</div>
  <div class="s" style="top:260px"></div>
  <div class="t d" style="top:267px">Copy Shape Attributes</div>
  <div class="t d" style="top:282px">Paste Shape Attributes</div>
  <div class="s" style="top:297px"></div>
  <div class="t d" style="top:302px">Merge Layers</div>
  <div class="t" style="top:317px">Merge Visible</div>
  <div class="t" style="top:332px">Flatten Image</div>
  <div class="s" style="top:348px"></div>
  <div class="t" style="top:353px">No Color</div>
  <div class="t" style="top:367px">Red</div>
  <div class="t" style="top:382px">Orange</div>
  <div class="t" style="top:397px">Yellow</div>
  <div class="t" style="top:412px">Green</div>
  <div class="t" style="top:427px">Blue</div>
  <div class="t" style="top:442px">Violet</div>
  <div class="t" style="top:457px">Gray</div>
  <div class="s" style="top:473px"></div>
</div>
</body></html>
